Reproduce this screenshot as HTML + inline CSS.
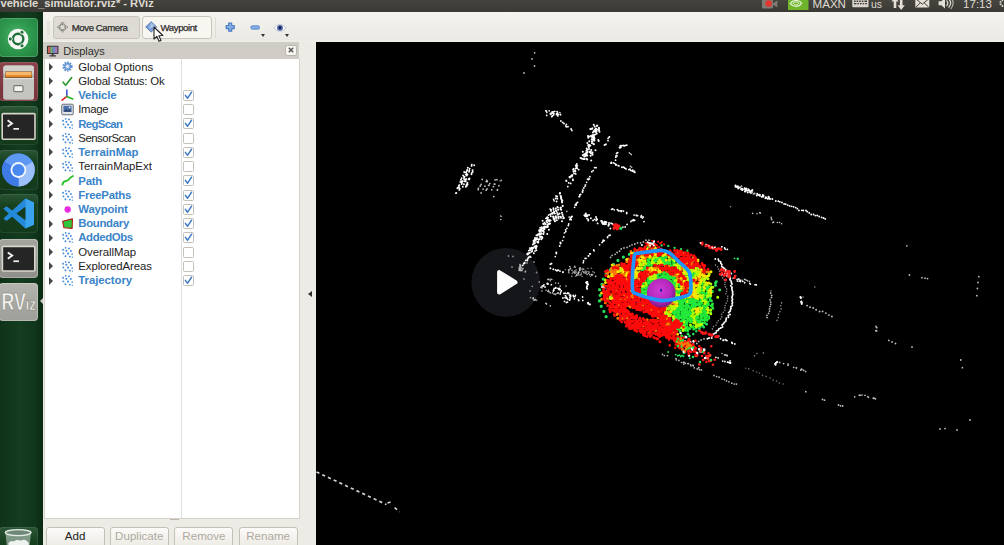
<!DOCTYPE html>
<html><head><meta charset="utf-8"><title>RViz</title>
<style>
*{box-sizing:border-box;margin:0;padding:0}
html,body{width:1004px;height:545px;overflow:hidden;background:#000;font-family:"Liberation Sans",sans-serif;}
#root{position:relative;width:1004px;height:545px;overflow:hidden;background:#edebe5}
.abs{position:absolute}
#topbar{left:0;top:0;width:1004px;height:12px;background:linear-gradient(#45443f,#3a3934);color:#dfdbd2;font-size:11.2px;font-weight:bold;overflow:hidden}
#topbar .title{position:absolute;left:0.5px;top:-2.6px;white-space:nowrap;letter-spacing:-0.04px}
#topbar .ind{position:absolute;top:-3.2px;font-weight:normal;white-space:nowrap;font-size:11.6px}
#launcher{left:0;top:12px;width:43px;height:533px;background:linear-gradient(90deg,#0e3318,#143c1f 45%,#10371b 80%,#0a2912);overflow:hidden}
.tile{position:absolute;left:-1px;width:39px;border-radius:4px;overflow:hidden}
#toolbar{left:43px;top:12px;width:961px;height:30px;background:linear-gradient(#f5f4ef,#ebe9e3 92%,#f0efea)}
.tbtn{position:absolute;top:4.3px;height:22.6px;border:1px solid #c9c5bc;border-radius:3px;font-size:9.6px;color:#2b2b2b;line-height:22.6px;white-space:nowrap;letter-spacing:-0.42px;-webkit-text-stroke:0.25px #2b2b2b}
#panel{left:43px;top:42px;width:273px;height:503px;background:#edebe5}
#phead{left:0;top:0;width:256px;height:17px;background:#cfccc5;font-size:11px;color:#2e2e2e;line-height:16px}
#tree{left:0.5px;top:16.5px;width:256.3px;height:460px;background:#fff;border:1px solid #d6d2ca;border-top:none}
#tree .divider{position:absolute;left:136px;top:0;width:1px;height:100%;background:#dedede}
.row{position:absolute;left:0;height:14px;width:255px;font-size:11.4px;line-height:14px;color:#222;white-space:nowrap}
.row .arr{position:absolute;left:4.9px;top:3px;width:0;height:0;border-left:4.5px solid #444;border-top:4px solid transparent;border-bottom:4px solid transparent}
.row .ic{position:absolute;left:16.6px;top:0.5px;width:13px;height:13px}
.row .lb{position:absolute;left:33.8px;top:-0.3px}
.row.b .lb{font-weight:bold;color:#3a84c8;letter-spacing:-0.15px}
.row .cb{position:absolute;left:138.6px;top:1.5px;width:11px;height:11px;border:1px solid #c4c0b8;background:#fff;border-radius:1.5px}
.row .cb svg{position:absolute;left:-1px;top:-1px;width:11px;height:11px}
.btn{position:absolute;top:485px;height:22px;border:1px solid #c4c0b7;border-radius:3px;background:linear-gradient(#fcfbf9,#ece9e2);font-size:11.6px;text-align:center;line-height:15.8px;color:#aeaaa1}
#view{left:316px;top:42px;width:688px;height:503px;background:#000;overflow:hidden}
#view svg{position:absolute;left:0;top:0;filter:blur(0.3px)}
</style></head><body>
<div id="root">
<div id="topbar" class="abs"><span class="title">vehicle_simulator.rviz* - RViz</span>
<span class="ind" style="left:812.5px">MAXN</span><span class="ind" style="left:871px;font-size:10.5px;top:-2.4px">us</span><span class="ind" style="left:963px">17:13</span>
<svg class="abs" style="left:761px;top:0" width="18" height="12" viewBox="0 0 18 12"><rect x="1" y="-2" width="11" height="10.5" rx="1.5" fill="#7f7a74"/><path d="M12 3.2 L16.4 0.4 V7.2 L12 5Z" fill="#7f7a74"/><circle cx="7.6" cy="3.6" r="3.3" fill="#e2362e"/></svg>
<svg class="abs" style="left:788px;top:0" width="21" height="11" viewBox="0 0 21 11"><rect x="0" y="-2" width="20.5" height="12" fill="#6fb52c"/><path d="M2.2 3.6 C5 -0.6 11 -0.4 13.6 3.2 C11.2 7.2 5.6 7.6 2.2 3.6Z" fill="none" stroke="#e6f2d6" stroke-width="1.2"/><path d="M5 3.4 C6.4 1.4 9.6 1.4 11 3.3 C9.6 5.2 6.6 5.4 5 3.4Z" fill="none" stroke="#e6f2d6" stroke-width="1"/></svg>
<svg class="abs" style="left:852px;top:0" width="17" height="8" viewBox="0 0 17 8"><rect x="0.3" y="-2" width="16.2" height="9.3" rx="0.8" fill="#d9d5cc"/><g fill="#3c3b37"><rect x="2" y="0.5" width="1.6" height="1.5"/><rect x="4.6" y="0.5" width="1.6" height="1.5"/><rect x="7.2" y="0.5" width="1.6" height="1.5"/><rect x="9.8" y="0.5" width="1.6" height="1.5"/><rect x="12.4" y="0.5" width="2.6" height="1.5"/><rect x="2" y="3" width="2.4" height="1.3"/><rect x="5.4" y="3" width="1.6" height="1.3"/><rect x="8" y="3" width="1.6" height="1.3"/><rect x="10.6" y="3" width="1.6" height="1.3"/><rect x="13.2" y="3" width="1.8" height="1.3"/></g></svg>
<svg class="abs" style="left:891px;top:0" width="15" height="11" viewBox="0 0 15 11"><g fill="#e4e0d7"><path d="M4 -3 L7.6 1.6 H5.3 V8 H2.7 V1.6 H0.4Z"/><path d="M10.2 10 L13.8 5.2 H11.5 V-1 H8.9 V5.2 H6.6Z"/></g></svg>
<svg class="abs" style="left:915px;top:0" width="15" height="9" viewBox="0 0 15 9"><rect x="0.3" y="-2" width="14" height="9.6" rx="0.8" fill="#e4e0d7"/><path d="M1 -1 L7.3 4.2 L13.6 -1 M1 7 L5.4 2.8 M13.6 7 L9.2 2.8" fill="none" stroke="#3c3b37" stroke-width="1"/></svg>
<svg class="abs" style="left:938px;top:0" width="17" height="11" viewBox="0 0 17 11"><path d="M0.6 1.2 H3.4 L7 -2.2 V8.6 L3.4 5.2 H0.6Z" fill="#e4e0d7"/><g fill="none" stroke="#e4e0d7" stroke-width="1.2" stroke-linecap="round"><path d="M8.8 0.8 C10 2.2 10 4.2 8.8 5.6"/><path d="M10.9 -0.8 C13 1.6 13 4.8 10.9 7.2"/><path d="M13 -2.2 C15.8 0.8 15.8 5.6 13 8.6" opacity="0.7"/></g></svg>
<svg class="abs" style="left:998px;top:0" width="8" height="10" viewBox="0 0 8 10"><circle cx="5.4" cy="3" r="3" fill="none" stroke="#e4e0d7" stroke-width="2" stroke-dasharray="1.4 1"/></svg>

</div>
<div id="launcher" class="abs">
<!-- coordinates relative to launcher (top = 12) -->
<div class="tile" style="top:5.5px;height:39px;background:radial-gradient(circle at 45% 45%,#4fb56c 0%,#2f9a4f 45%,#1f7f3c 100%);box-shadow:inset 0 0 0 1px rgba(255,255,255,0.18)">
<svg style="position:absolute;left:0;top:0" width="39" height="39" viewBox="0 0 39 39"><circle cx="19.1" cy="21" r="10.3" fill="#f4f7f4"/><circle cx="19.1" cy="21" r="5.2" fill="none" stroke="#1f6d38" stroke-width="2.4"/><g fill="#1f6d38" stroke="#f4f7f4" stroke-width="0.9"><circle cx="11.3" cy="21" r="2"/><circle cx="23" cy="14.2" r="2"/><circle cx="23" cy="27.8" r="2"/></g></svg></div>
<div class="tile" style="top:49.5px;height:39.5px;background:linear-gradient(#8a444b,#78333a);box-shadow:inset 0 0 0 1px rgba(255,255,255,0.12)">
<svg style="position:absolute;left:0;top:0" width="39" height="40" viewBox="0 0 39 40"><rect x="4.3" y="3.6" width="30.7" height="34" rx="2.6" fill="#b4b4b0"/><rect x="4.3" y="3.6" width="30.7" height="9" rx="2.6" fill="#d2d1cc"/><rect x="6.2" y="9.4" width="26.8" height="7.4" fill="#6b4a2a"/><rect x="6.6" y="9.8" width="26" height="3.6" fill="#f7b86b"/><rect x="6.6" y="13" width="26" height="2.2" fill="#e58a2c"/><rect x="4.3" y="16" width="30.7" height="21.6" rx="2" fill="#c4c4c0"/><rect x="4.3" y="16" width="30.7" height="1.2" fill="#e2e2de"/><rect x="14.8" y="23.6" width="9.2" height="6" rx="1.2" fill="#f4f4f2" stroke="#77776f" stroke-width="1.2"/></svg></div>
<div class="tile" style="top:93.5px;height:39.5px;background:linear-gradient(#2f5a3a,#17401f 30%,#123a1b);box-shadow:inset 0 0 0 1px rgba(255,255,255,0.08)">
<svg style="position:absolute;left:0;top:0" width="39" height="40" viewBox="0 0 39 40"><rect x="3.2" y="7.6" width="32.8" height="25.6" rx="1" fill="#252525" stroke="#d8d5cb" stroke-width="1.6"/><path d="M8.6 14.2 L13 17.4 L8.6 20.6" fill="none" stroke="#f1f1f1" stroke-width="1.9"/><rect x="14.4" y="22" width="5.6" height="1.7" fill="#f1f1f1"/></svg></div>
<div class="tile" style="top:138px;height:39.5px;background:linear-gradient(#2a5535,#17401f 30%,#123a1b);box-shadow:inset 0 0 0 1px rgba(255,255,255,0.08)">
<svg style="position:absolute;left:0;top:0" width="40" height="40" viewBox="0 0 40 40"><circle cx="19.4" cy="20" r="16.4" fill="#4a8af0"/><path d="M19.4 20 L5.3 11.6 A16.4 16.4 0 0 1 33.6 11.8Z" fill="#5d98f3"/><path d="M19.4 20 L33.6 11.8 A16.4 16.4 0 0 1 19.6 36.4Z" fill="#9cc0fa"/><path d="M19.4 20 L19.6 36.4 A16.4 16.4 0 0 1 5.3 11.6Z" fill="#3f7be6"/><circle cx="19.4" cy="20" r="7.9" fill="#f3f7ff"/><circle cx="19.4" cy="20" r="6.1" fill="#4a8af0"/></svg></div>
<div class="tile" style="top:182px;height:38.5px;background:linear-gradient(#2a5535,#17401f 30%,#123a1b);box-shadow:inset 0 0 0 1px rgba(255,255,255,0.08)">
<svg style="position:absolute;left:0;top:0" width="39" height="39" viewBox="0 0 39 39"><path d="M26.4 4.6 L35 8.6 V30.8 L26.4 34.6 L4.4 14.8 L7.4 12.2 L26.4 26 V13 L7.4 27 L4.4 24.6Z" fill="#2489d6"/><path d="M26.4 4.6 L35 8.6 V30.8 L26.4 34.6Z" fill="#3aa3ee"/><path d="M26.4 13 V26 L17.6 19.6Z" fill="#123a1b"/></svg></div>
<div class="tile" style="top:226.5px;height:39px;background:linear-gradient(#a5a5a0,#8f8f8a);box-shadow:inset 0 0 0 1px rgba(255,255,255,0.25)">
<svg style="position:absolute;left:0;top:0" width="39" height="39" viewBox="0 0 39 39"><rect x="3.4" y="7.4" width="32.4" height="24.6" rx="1" fill="#252525" stroke="#d8d5cb" stroke-width="1.6"/><path d="M8.8 13.4 L13.2 16.6 L8.8 19.8" fill="none" stroke="#f1f1f1" stroke-width="1.9"/><rect x="14.4" y="21.4" width="5.6" height="1.7" fill="#f1f1f1"/></svg></div>
<div class="tile" style="top:270.5px;height:38px;background:linear-gradient(#b4b4ae,#9f9f99);box-shadow:inset 0 0 0 1px rgba(255,255,255,0.25)">
<svg style="position:absolute;left:0;top:0" width="39" height="38" viewBox="0 0 39 38"><text x="2.4" y="27.4" font-family="Liberation Sans, sans-serif" font-size="23" font-weight="bold" fill="#f4f4f0" stroke="#77776f" stroke-width="0.5"><tspan textLength="24.5" lengthAdjust="spacingAndGlyphs">RV</tspan><tspan x="26.4" font-size="16" textLength="10.6" lengthAdjust="spacingAndGlyphs">iz</tspan></text></svg></div>
<i class="abs" style="left:39.6px;top:286.4px;border-right:3.4px solid #c9c9c3;border-top:3.4px solid transparent;border-bottom:3.4px solid transparent"></i>
<div class="tile" style="top:514.5px;height:40px;background:linear-gradient(#2a5535,#17401f 40%,#123a1b);box-shadow:inset 0 0 0 1px rgba(255,255,255,0.08)">
<svg style="position:absolute;left:0;top:0" width="39" height="40" viewBox="0 0 39 40"><path d="M6.4 5.6 L9 30 H29.4 L32 5.6Z" fill="#9fb3a6" opacity="0.75"/><ellipse cx="19.2" cy="5.6" rx="12.9" ry="3" fill="#6f8878" stroke="#e3ebe5" stroke-width="1.4"/><path d="M9.4 16 C12 12.8 14 15 16.4 13.4 C18.6 11.8 21 14.6 23.4 13 C25.6 11.8 28.6 14 29.8 16 L29 30 H10Z" fill="#eef2ee"/></svg></div>

</div>
<div id="toolbar" class="abs">
<div class="tbtn" style="left:10.4px;width:87px;background:#dedbd4;padding-left:17.4px">Move Camera</div>
<div class="tbtn" style="left:99.2px;width:69.4px;background:#f8f6f1;padding-left:17.4px">Waypoint</div>
<i class="abs" style="left:4.3px;top:8.5px;width:3px;height:14px;background-image:radial-gradient(circle,#dcd9d1 0.5px,transparent 0.75px);background-size:1.5px 2px"></i>
<svg class="abs" style="left:13.3px;top:9.2px" width="13" height="12.4" viewBox="0 0 18 18"><g fill="none" stroke="#4a4a4a" stroke-width="1.1" stroke-dasharray="1.6 1.0"><rect x="5.5" y="5.5" width="7" height="7"/><path d="M9 1.5 L6.6 4.4 H11.4Z M9 16.5 L6.6 13.6 H11.4Z M1.5 9 L4.4 6.6 V11.4Z M16.5 9 L13.6 6.6 V11.4Z"/></g></svg>
<svg class="abs" style="left:101.8px;top:8.8px" width="12.4" height="11.8" viewBox="0 0 12.4 11.8"><path d="M0.7 5.9 L6.2 0.7 L11.7 5.9 L6.2 11.1Z" fill="#7a9fd8" stroke="#4a6aa6" stroke-width="0.8"/><path d="M6.2 1.4 L10.8 5.7 L4 7.5Z" fill="#b4cbee" opacity="0.8"/></svg>
<svg class="abs" style="left:110px;top:13.6px" width="12" height="18" viewBox="0 0 12 18"><path d="M1 1 L1 13 L3.9 10.4 L6 15.3 L8 14.4 L5.9 9.7 L9.8 9.5Z" fill="#fff" stroke="#222" stroke-width="1.1" stroke-linejoin="round"/></svg>
<i class="abs" style="left:172.2px;top:5px;width:1px;height:21px;background:#e0ddd5"></i>
<svg class="abs" style="left:181.9px;top:10.2px" width="10.4" height="10.2" viewBox="0 0 12 12"><path d="M4.2 1.2 H7.8 V4.2 H10.8 V7.8 H7.8 V10.8 H4.2 V7.8 H1.2 V4.2 H4.2Z" fill="#86aee3" stroke="#4b7cc2" stroke-width="1.3" stroke-linejoin="round"/></svg>
<svg class="abs" style="left:206.6px;top:12.6px" width="10.4" height="5.2" viewBox="0 0 12 6"><rect x="1" y="1" width="10" height="3.8" rx="1.6" fill="#86aee3" stroke="#5b8bd0" stroke-width="1.1"/></svg>
<i class="abs" style="left:217.8px;top:21.8px;border-top:3px solid #333;border-left:2.6px solid transparent;border-right:2.6px solid transparent"></i>
<svg class="abs" style="left:229.5px;top:10.5px" width="14" height="10" viewBox="0 0 14 10"><path d="M0.8 5 C3.5 0.5 10.5 0.5 13.2 5 C10.5 9.3 3.5 9.3 0.8 5Z" fill="#f4f6fb" stroke="#b7bfd2" stroke-width="0.8"/><circle cx="7" cy="4.8" r="2.9" fill="#4a62a8"/><circle cx="7" cy="4.8" r="1.3" fill="#141a3a"/></svg>
<i class="abs" style="left:242.3px;top:21.8px;border-top:3px solid #333;border-left:2.6px solid transparent;border-right:2.6px solid transparent"></i>

</div>
<div id="panel" class="abs">
<div id="phead" class="abs"><span style="position:absolute;left:20.3px;top:0.5px">Displays</span></div>
<svg class="abs" style="left:2.9px;top:3.2px" width="13.4" height="12" viewBox="0 0 15 14"><rect x="0.8" y="0.8" width="13.4" height="9.8" rx="1" fill="#333"/><rect x="2" y="2" width="2.8" height="7.4" fill="#c9605a"/><rect x="4.8" y="2" width="2.7" height="7.4" fill="#7ab776"/><rect x="7.5" y="2" width="2.7" height="7.4" fill="#6f86c8"/><rect x="10.2" y="2" width="2.8" height="7.4" fill="#a877b8"/><rect x="6.3" y="10.6" width="2.4" height="1.6" fill="#333"/><rect x="3.6" y="12" width="7.8" height="1.4" rx="0.6" fill="#333"/></svg>
<div class="abs" style="left:242px;top:2.6px;width:12px;height:11.6px;border:1px solid #b9b5ac;border-radius:2.5px;background:#f8f7f3"><svg style="position:absolute;left:2px;top:1.8px" width="6" height="6" viewBox="0 0 6 6"><path d="M0.8 0.8 L5.2 5.2 M5.2 0.8 L0.8 5.2" stroke="#555" stroke-width="1.5"/></svg></div>
<i class="abs" style="left:264.6px;top:248.8px;border-right:4.2px solid #2e2e2e;border-top:3.9px solid transparent;border-bottom:3.9px solid transparent"></i>
<i class="abs" style="left:127px;top:477.2px;width:9px;height:1.2px;background-image:radial-gradient(circle,#bdb9b0 0.5px,transparent 0.7px);background-size:1.8px 1.2px"></i>

<div id="tree" class="abs"><div class="divider"></div>
<div class="row" style="top:1.40px"><i class="arr"></i><svg class="ic" viewBox="0 0 14 14"><circle cx="7" cy="7" r="4.2" fill="none" stroke="#5b8fd0" stroke-width="2.6" stroke-dasharray="1.6 1.1"/><circle cx="7" cy="7" r="3.4" fill="#8fb4e3" stroke="#4a7fc4" stroke-width="0.8"/><circle cx="7" cy="7" r="1.5" fill="#e9f0fa"/></svg><span class="lb" style="letter-spacing:-0.04px">Global Options</span></div>
<div class="row" style="top:15.64px"><i class="arr"></i><svg class="ic" viewBox="0 0 14 14"><path d="M2.2 7.8 L5 11 L11.5 2.8" fill="none" stroke="#2f9a2f" stroke-width="1.8" stroke-linecap="round" stroke-linejoin="round"/></svg><span class="lb" style="letter-spacing:-0.18px">Global Status: Ok</span></div>
<div class="row b" style="top:29.88px"><i class="arr"></i><svg class="ic" viewBox="0 0 14 14"><path d="M6.3 8 L6.3 1.2" stroke="#2b4fd6" stroke-width="1.6" stroke-linecap="round"/><path d="M6.3 8 L1.2 12" stroke="#e02020" stroke-width="1.7" stroke-linecap="round"/><path d="M6.3 8 L12.6 10.8" stroke="#27b327" stroke-width="1.7" stroke-linecap="round"/></svg><span class="lb" style="letter-spacing:-0.15px">Vehicle</span><span class="cb"><svg viewBox="0 0 11 11"><path d="M2.4 5.4 L4.6 8.2 L8.6 2.2" fill="none" stroke="#3a78c2" stroke-width="1.5" stroke-linecap="round" stroke-linejoin="round"/></svg></span></div>
<div class="row" style="top:44.12px"><i class="arr"></i><svg class="ic" viewBox="0 0 14 14"><rect x="0.8" y="1.3" width="12.4" height="11.4" rx="1.2" fill="#dfe3ea" stroke="#5b5f66" stroke-width="1"/><rect x="2.6" y="3" width="8.8" height="6.4" fill="#4a6ea8"/><path d="M2.6 9.4 L5.5 6.5 L7.5 8.3 L9.3 7 L11.4 9.4Z" fill="#2a3f66"/><circle cx="9.3" cy="4.7" r="1" fill="#e8eefc"/></svg><span class="lb" style="letter-spacing:-0.35px">Image</span><span class="cb"></span></div>
<div class="row b" style="top:58.36px"><i class="arr"></i><svg class="ic" viewBox="0 0 14 14" fill="#3f86d6"><circle cx="2.2" cy="4" r="1"/><circle cx="5" cy="2" r="0.9"/><circle cx="8.6" cy="2.6" r="1"/><circle cx="5.8" cy="5.2" r="1.1"/><circle cx="10.6" cy="5.4" r="1"/><circle cx="2.6" cy="8" r="1"/><circle cx="7.6" cy="8.2" r="1.1"/><circle cx="12" cy="8.6" r="0.9"/><circle cx="4.8" cy="11" r="1"/><circle cx="9.6" cy="11.4" r="1"/><circle cx="12.2" cy="12" r="0.7"/></svg><span class="lb" style="letter-spacing:-0.69px">RegScan</span><span class="cb"><svg viewBox="0 0 11 11"><path d="M2.4 5.4 L4.6 8.2 L8.6 2.2" fill="none" stroke="#3a78c2" stroke-width="1.5" stroke-linecap="round" stroke-linejoin="round"/></svg></span></div>
<div class="row" style="top:72.60px"><i class="arr"></i><svg class="ic" viewBox="0 0 14 14" fill="#3f86d6"><circle cx="2.2" cy="4" r="1"/><circle cx="5" cy="2" r="0.9"/><circle cx="8.6" cy="2.6" r="1"/><circle cx="5.8" cy="5.2" r="1.1"/><circle cx="10.6" cy="5.4" r="1"/><circle cx="2.6" cy="8" r="1"/><circle cx="7.6" cy="8.2" r="1.1"/><circle cx="12" cy="8.6" r="0.9"/><circle cx="4.8" cy="11" r="1"/><circle cx="9.6" cy="11.4" r="1"/><circle cx="12.2" cy="12" r="0.7"/></svg><span class="lb" style="letter-spacing:-0.49px">SensorScan</span><span class="cb"></span></div>
<div class="row b" style="top:86.84px"><i class="arr"></i><svg class="ic" viewBox="0 0 14 14" fill="#3f86d6"><circle cx="2.2" cy="4" r="1"/><circle cx="5" cy="2" r="0.9"/><circle cx="8.6" cy="2.6" r="1"/><circle cx="5.8" cy="5.2" r="1.1"/><circle cx="10.6" cy="5.4" r="1"/><circle cx="2.6" cy="8" r="1"/><circle cx="7.6" cy="8.2" r="1.1"/><circle cx="12" cy="8.6" r="0.9"/><circle cx="4.8" cy="11" r="1"/><circle cx="9.6" cy="11.4" r="1"/><circle cx="12.2" cy="12" r="0.7"/></svg><span class="lb" style="letter-spacing:-0.04px">TerrainMap</span><span class="cb"><svg viewBox="0 0 11 11"><path d="M2.4 5.4 L4.6 8.2 L8.6 2.2" fill="none" stroke="#3a78c2" stroke-width="1.5" stroke-linecap="round" stroke-linejoin="round"/></svg></span></div>
<div class="row" style="top:101.08px"><i class="arr"></i><svg class="ic" viewBox="0 0 14 14" fill="#3f86d6"><circle cx="2.2" cy="4" r="1"/><circle cx="5" cy="2" r="0.9"/><circle cx="8.6" cy="2.6" r="1"/><circle cx="5.8" cy="5.2" r="1.1"/><circle cx="10.6" cy="5.4" r="1"/><circle cx="2.6" cy="8" r="1"/><circle cx="7.6" cy="8.2" r="1.1"/><circle cx="12" cy="8.6" r="0.9"/><circle cx="4.8" cy="11" r="1"/><circle cx="9.6" cy="11.4" r="1"/><circle cx="12.2" cy="12" r="0.7"/></svg><span class="lb" style="letter-spacing:0.01px">TerrainMapExt</span><span class="cb"></span></div>
<div class="row b" style="top:115.32px"><i class="arr"></i><svg class="ic" viewBox="0 0 14 14"><path d="M1.5 11.5 C3 5.5 6 9 8 6.2 C9.6 4 10.5 3 12.8 2.2" fill="none" stroke="#2fc12f" stroke-width="2" stroke-linecap="round"/></svg><span class="lb" style="letter-spacing:-0.22px">Path</span><span class="cb"><svg viewBox="0 0 11 11"><path d="M2.4 5.4 L4.6 8.2 L8.6 2.2" fill="none" stroke="#3a78c2" stroke-width="1.5" stroke-linecap="round" stroke-linejoin="round"/></svg></span></div>
<div class="row b" style="top:129.56px"><i class="arr"></i><svg class="ic" viewBox="0 0 14 14" fill="#3f86d6"><circle cx="2.2" cy="4" r="1"/><circle cx="5" cy="2" r="0.9"/><circle cx="8.6" cy="2.6" r="1"/><circle cx="5.8" cy="5.2" r="1.1"/><circle cx="10.6" cy="5.4" r="1"/><circle cx="2.6" cy="8" r="1"/><circle cx="7.6" cy="8.2" r="1.1"/><circle cx="12" cy="8.6" r="0.9"/><circle cx="4.8" cy="11" r="1"/><circle cx="9.6" cy="11.4" r="1"/><circle cx="12.2" cy="12" r="0.7"/></svg><span class="lb" style="letter-spacing:-0.25px">FreePaths</span><span class="cb"><svg viewBox="0 0 11 11"><path d="M2.4 5.4 L4.6 8.2 L8.6 2.2" fill="none" stroke="#3a78c2" stroke-width="1.5" stroke-linecap="round" stroke-linejoin="round"/></svg></span></div>
<div class="row b" style="top:143.80px"><i class="arr"></i><svg class="ic" viewBox="0 0 14 14"><circle cx="7.2" cy="7" r="3.4" fill="#e82be0"/></svg><span class="lb" style="letter-spacing:-0.20px">Waypoint</span><span class="cb"><svg viewBox="0 0 11 11"><path d="M2.4 5.4 L4.6 8.2 L8.6 2.2" fill="none" stroke="#3a78c2" stroke-width="1.5" stroke-linecap="round" stroke-linejoin="round"/></svg></span></div>
<div class="row b" style="top:158.04px"><i class="arr"></i><svg class="ic" viewBox="0 0 14 14"><path d="M1.8 4.6 L12.3 2 L12 12.2 L3.2 11.6Z" fill="#2fc83a" stroke="#b01818" stroke-width="1.2" stroke-linejoin="round"/></svg><span class="lb" style="letter-spacing:-0.32px">Boundary</span><span class="cb"><svg viewBox="0 0 11 11"><path d="M2.4 5.4 L4.6 8.2 L8.6 2.2" fill="none" stroke="#3a78c2" stroke-width="1.5" stroke-linecap="round" stroke-linejoin="round"/></svg></span></div>
<div class="row b" style="top:172.28px"><i class="arr"></i><svg class="ic" viewBox="0 0 14 14" fill="#3f86d6"><circle cx="2.2" cy="4" r="1"/><circle cx="5" cy="2" r="0.9"/><circle cx="8.6" cy="2.6" r="1"/><circle cx="5.8" cy="5.2" r="1.1"/><circle cx="10.6" cy="5.4" r="1"/><circle cx="2.6" cy="8" r="1"/><circle cx="7.6" cy="8.2" r="1.1"/><circle cx="12" cy="8.6" r="0.9"/><circle cx="4.8" cy="11" r="1"/><circle cx="9.6" cy="11.4" r="1"/><circle cx="12.2" cy="12" r="0.7"/></svg><span class="lb" style="letter-spacing:-0.40px">AddedObs</span><span class="cb"><svg viewBox="0 0 11 11"><path d="M2.4 5.4 L4.6 8.2 L8.6 2.2" fill="none" stroke="#3a78c2" stroke-width="1.5" stroke-linecap="round" stroke-linejoin="round"/></svg></span></div>
<div class="row" style="top:186.52px"><i class="arr"></i><svg class="ic" viewBox="0 0 14 14" fill="#3f86d6"><circle cx="2.2" cy="4" r="1"/><circle cx="5" cy="2" r="0.9"/><circle cx="8.6" cy="2.6" r="1"/><circle cx="5.8" cy="5.2" r="1.1"/><circle cx="10.6" cy="5.4" r="1"/><circle cx="2.6" cy="8" r="1"/><circle cx="7.6" cy="8.2" r="1.1"/><circle cx="12" cy="8.6" r="0.9"/><circle cx="4.8" cy="11" r="1"/><circle cx="9.6" cy="11.4" r="1"/><circle cx="12.2" cy="12" r="0.7"/></svg><span class="lb" style="letter-spacing:-0.06px">OverallMap</span><span class="cb"></span></div>
<div class="row" style="top:200.76px"><i class="arr"></i><svg class="ic" viewBox="0 0 14 14" fill="#3f86d6"><circle cx="2.2" cy="4" r="1"/><circle cx="5" cy="2" r="0.9"/><circle cx="8.6" cy="2.6" r="1"/><circle cx="5.8" cy="5.2" r="1.1"/><circle cx="10.6" cy="5.4" r="1"/><circle cx="2.6" cy="8" r="1"/><circle cx="7.6" cy="8.2" r="1.1"/><circle cx="12" cy="8.6" r="0.9"/><circle cx="4.8" cy="11" r="1"/><circle cx="9.6" cy="11.4" r="1"/><circle cx="12.2" cy="12" r="0.7"/></svg><span class="lb" style="letter-spacing:-0.09px">ExploredAreas</span><span class="cb"></span></div>
<div class="row b" style="top:215.00px"><i class="arr"></i><svg class="ic" viewBox="0 0 14 14" fill="#3f86d6"><circle cx="2.2" cy="4" r="1"/><circle cx="5" cy="2" r="0.9"/><circle cx="8.6" cy="2.6" r="1"/><circle cx="5.8" cy="5.2" r="1.1"/><circle cx="10.6" cy="5.4" r="1"/><circle cx="2.6" cy="8" r="1"/><circle cx="7.6" cy="8.2" r="1.1"/><circle cx="12" cy="8.6" r="0.9"/><circle cx="4.8" cy="11" r="1"/><circle cx="9.6" cy="11.4" r="1"/><circle cx="12.2" cy="12" r="0.7"/></svg><span class="lb" style="letter-spacing:-0.07px">Trajectory</span><span class="cb"><svg viewBox="0 0 11 11"><path d="M2.4 5.4 L4.6 8.2 L8.6 2.2" fill="none" stroke="#3a78c2" stroke-width="1.5" stroke-linecap="round" stroke-linejoin="round"/></svg></span></div>
</div>
<div class="btn" style="left:2.6px;width:59.1px;color:#222">Add</div>
<div class="btn" style="left:66.7px;width:59.1px">Duplicate</div>
<div class="btn" style="left:131.4px;width:59.1px">Remove</div>
<div class="btn" style="left:195.5px;width:59.2px">Rename</div>
</div>
<div id="view" class="abs">
<svg width="688" height="503" viewBox="316 42 688 503">
<circle cx="505.8" cy="282.4" r="34.4" fill="#15161a"/>
<g fill="none" stroke-linecap="round">
<path stroke="#bdbdbd" stroke-width="1.77" d="M534.6 52.8h0M532.0 59.0h0M534.5 66.0h0M524.0 73.0h0M519.9 269.6h0M521.0 267.7h0M519.1 268.1h0M521.7 270.3h0M520.1 266.6h0M520.0 264.7h0M521.9 270.6h0M520.5 269.7h0M522.6 268.6h0M520.6 270.4h0M519.6 269.5h0M519.2 270.3h0M519.5 268.7h0M520.7 265.5h0M478.4 188.3h0M481.1 184.5h0M482.2 179.4h0M480.2 186.2h0M478.2 189.7h0M481.1 193.0h0M486.7 180.4h0M487.2 181.5h0M483.1 189.1h0M487.0 180.7h0M486.2 181.6h0M484.9 186.2h0M487.1 188.8h0M489.0 185.3h0M486.2 190.2h0M489.8 183.6h0M488.6 185.3h0M491.8 189.8h0M494.9 184.1h0M493.5 186.7h0M495.1 179.9h0M494.2 184.1h0M496.9 179.7h0M497.4 190.2h0M498.9 185.7h0M501.2 180.4h0M493.8 196.6h0M497.5 189.6h0M619.7 277.2h0M620.1 274.3h0M622.6 272.5h0M624.1 270.1h0M625.4 267.6h0M628.4 266.3h0M630.6 264.5h0M610.6 257.4h0M612.1 255.3h0M615.1 254.3h0M617.1 252.5h0M619.6 251.2h0M621.2 248.9h0M624.0 247.9h0M627.1 247.4h0M629.6 246.1h0M632.0 244.8h0M634.8 244.0h0M637.5 242.8h0M640.6 242.9h0M643.4 242.0h0M645.9 240.2h0M649.0 240.2h0M770.6 293.1h0M771.7 295.4h0M771.5 297.6h0M770.0 299.8h0M770.7 302.1h0M770.7 304.4h0M770.0 306.6h0M769.5 308.8h0M769.5 311.1h0M768.6 313.3h0M766.9 315.3h0M767.1 317.6h0M704.0 338.9h0M701.1 339.9h0M698.7 341.4h0M696.8 343.5h0M693.5 343.9h0M690.8 345.0h0M688.2 346.2h0M685.2 346.9h0M682.6 348.4h0M679.4 348.2h0M753.4 193.9h0M754.8 193.5h0M741.5 186.2h0M750.8 191.1h0M748.1 190.8h0M743.2 189.3h0M744.6 189.7h0M737.3 187.6h0M752.5 192.0h0M740.5 187.5h0M748.0 188.8h0M742.9 189.6h0M741.7 188.8h0M748.7 190.7h0M876.8 327.7h0M875.8 330.7h0M876.7 330.9h0M876.7 330.8h0M788.1 364.1h0M779.7 362.4h0M796.4 367.7h0M800.8 370.0h0M796.4 368.1h0M803.7 370.3h0M801.5 369.2h0M801.9 369.4h0M793.7 367.3h0M805.6 371.6h0M788.0 365.2h0M783.6 363.6h0M822.5 399.4h0M824.5 400.2h0M840.5 405.8h0M838.5 405.0h0M805.8 391.7h0M859.3 395.3h0M860.1 395.2h0M854.7 396.8h0M906.8 245.8h0M909.4 275.0h0M922.0 277.7h0M925.0 278.2h0M927.5 278.6h0M978.8 276.7h0M978.0 282.5h0M977.4 288.5h0M976.8 295.7h0M876.0 326.5h0M888.8 340.4h0M892.0 342.0h0M895.5 343.5h0M912.0 347.0h0M960.8 360.0h0M962.4 367.7h0M842.6 406.0h0M940.0 429.0h0M957.0 430.0h0M945.0 428.6h0M970.0 420.0h0"/>
<path stroke="#ffffff" stroke-width="1.77" d="M553.7 114.8h0M553.9 113.5h0M550.3 113.7h0M560.6 114.7h0M560.2 114.4h0M557.0 114.3h0M546.7 115.4h0M557.5 114.8h0M546.5 111.2h0M550.6 113.3h0M556.5 113.9h0M557.6 113.0h0M556.5 114.6h0M551.7 116.7h0M557.8 115.9h0M551.9 112.8h0M553.3 113.8h0M558.2 114.4h0M552.8 112.5h0M552.4 116.0h0M551.0 114.4h0M557.1 111.6h0M571.1 129.0h0M565.7 125.9h0M566.4 124.4h0M571.9 130.4h0M564.1 123.6h0M568.0 126.7h0M566.4 126.8h0M560.9 121.0h0M562.6 122.4h0M563.9 123.4h0M606.0 144.2h0M609.4 136.8h0M605.6 144.7h0M608.0 140.7h0M604.5 145.0h0M608.1 138.4h0M608.3 138.1h0M609.3 137.0h0M553.6 199.3h0M556.6 196.7h0M557.2 196.5h0M554.1 200.8h0M555.7 198.5h0M550.1 209.1h0M556.0 196.0h0M557.4 198.7h0M551.0 211.0h0M556.6 201.5h0M525.7 260.4h0M528.1 258.2h0M530.8 257.1h0M524.9 262.9h0M527.3 259.9h0M529.4 256.8h0M524.4 262.6h0M524.1 263.5h0M527.5 259.2h0M523.7 263.7h0M528.6 257.4h0M522.8 265.4h0M530.0 256.4h0M527.4 260.6h0M588.3 179.5h0M594.6 167.6h0M587.6 179.2h0M591.8 171.7h0M593.2 170.6h0M589.4 178.9h0M596.1 167.7h0M589.9 176.7h0M579.1 196.7h0M579.6 196.5h0M583.7 187.9h0M583.0 190.4h0M585.4 184.9h0M580.7 194.5h0M582.4 191.3h0M579.7 194.8h0M586.6 182.3h0M582.5 192.3h0M585.1 186.2h0M572.1 216.4h0M568.3 225.5h0M571.4 217.3h0M568.7 223.9h0M570.6 218.9h0M565.6 229.8h0M570.9 217.6h0M576.0 204.0h0M576.2 205.0h0M571.3 217.0h0M569.8 219.5h0M576.6 203.1h0M566.9 228.3h0M577.7 202.3h0M571.2 219.7h0M575.2 205.0h0M564.5 232.8h0M565.8 231.5h0M574.6 207.3h0M563.7 236.9h0M550.7 264.0h0M550.3 264.3h0M562.6 240.6h0M560.4 242.8h0M551.5 263.7h0M560.4 242.3h0M556.2 252.5h0M559.7 246.0h0M556.5 252.7h0M560.5 243.6h0M560.3 242.8h0M551.6 263.7h0M560.8 243.3h0M556.3 253.5h0M555.3 256.6h0M624.2 145.9h0M625.2 145.5h0M621.7 145.6h0M626.8 145.2h0M623.3 145.5h0M620.3 145.7h0M616.0 156.0h0M616.1 156.1h0M616.5 153.7h0M619.5 147.4h0M620.0 147.9h0M621.0 147.1h0M615.6 160.2h0M617.8 152.6h0M615.8 157.2h0M617.0 155.9h0M616.8 153.2h0M613.5 162.8h0M588.3 219.4h0M586.9 218.4h0M584.3 215.2h0M588.3 220.6h0M585.8 215.6h0M588.0 220.1h0M626.6 212.8h0M626.6 212.9h0M626.8 212.6h0M621.3 211.5h0M643.3 217.1h0M619.0 210.9h0M626.7 213.6h0M612.7 208.8h0M637.6 215.7h0M634.1 215.1h0M621.8 210.8h0M623.5 211.1h0M611.6 209.3h0M641.1 217.2h0M618.2 210.5h0M641.8 216.5h0M641.0 216.8h0M617.3 209.6h0M636.2 215.6h0M636.3 215.2h0M620.7 210.8h0M614.2 209.8h0M625.2 227.0h0M633.9 220.6h0M627.1 224.4h0M634.7 220.3h0M632.3 220.5h0M633.3 220.4h0M622.9 227.1h0M633.6 219.6h0M630.9 221.5h0M603.2 240.1h0M604.3 240.6h0M602.1 242.4h0M607.5 237.6h0M609.0 235.5h0M607.6 236.9h0M602.9 241.4h0M610.2 235.1h0M594.1 250.8h0M593.7 250.0h0M589.7 253.9h0M590.3 253.9h0M588.6 256.0h0M585.1 258.4h0M599.6 244.8h0M588.3 255.8h0M586.0 258.3h0M580.0 268.8h0M580.4 268.2h0M579.9 270.1h0M578.2 273.3h0M576.8 275.1h0M583.3 262.7h0M578.7 272.2h0M583.6 260.9h0M553.9 290.2h0M588.2 302.7h0M578.8 300.6h0M554.2 288.4h0M542.8 285.9h0M545.0 287.0h0M544.0 284.8h0M563.9 293.4h0M587.9 303.6h0M570.7 296.5h0M560.2 293.9h0M553.3 291.1h0M569.4 294.9h0M574.7 296.7h0M560.6 292.3h0M588.9 303.9h0M590.2 304.3h0M553.6 290.1h0M558.0 293.0h0M582.8 300.4h0M543.2 286.1h0M573.5 296.5h0M589.7 304.5h0M578.4 299.8h0M587.7 303.0h0M570.5 296.0h0M566.8 297.9h0M575.4 295.5h0M565.5 295.6h0M564.5 301.3h0M562.9 298.0h0M570.3 298.8h0M574.4 298.8h0M566.4 297.1h0M570.7 296.1h0M566.5 298.2h0M567.5 302.1h0M567.3 298.8h0M565.0 297.6h0M570.1 296.8h0M569.9 297.4h0M573.2 295.3h0M569.6 300.2h0M567.8 299.3h0M569.6 299.7h0M582.6 297.0h0M570.1 297.0h0M566.4 302.5h0M558.5 289.0h0M551.4 284.7h0M567.8 293.0h0M555.8 287.6h0M561.3 290.9h0M557.9 288.3h0M559.3 289.8h0M567.0 293.6h0M568.8 293.3h0M555.8 288.2h0M565.2 293.2h0M570.6 295.2h0M559.4 288.3h0M560.2 289.4h0M727.4 249.4h0M724.6 248.0h0M721.8 246.8h0M725.4 249.2h0M721.9 246.8h0M725.8 280.1h0M722.1 274.6h0M728.6 276.0h0M727.0 275.6h0M731.4 273.5h0M726.9 273.4h0M725.0 273.3h0M727.4 274.7h0M733.3 278.2h0M726.9 275.9h0M729.6 276.4h0M728.6 274.9h0M749.7 283.3h0M750.4 284.1h0M737.1 279.5h0M737.4 281.1h0M744.6 282.6h0M738.8 279.0h0M742.8 281.3h0M756.3 284.9h0M739.3 281.2h0M740.1 280.3h0M744.7 282.8h0M740.5 281.5h0M755.0 284.6h0M740.5 280.3h0M730.0 360.8h0M727.9 362.1h0M722.7 361.1h0M730.5 362.7h0M718.1 357.8h0M715.9 357.3h0M729.1 362.6h0M724.9 361.5h0M730.3 363.2h0M727.6 362.2h0"/>
<path stroke="#ffffff" stroke-width="1.63" d="M549.2 110.9h0M559.9 112.5h0M557.4 112.1h0M546.8 112.6h0M552.1 111.8h0M553.3 111.7h0M545.7 110.7h0M554.8 111.4h0M642.4 218.2h0M641.3 215.6h0M643.9 221.8h0M644.1 221.6h0"/>
<path stroke="#ffffff" stroke-width="2.04" d="M594.3 130.7h0M587.2 151.7h0M595.4 129.5h0M584.0 154.6h0M599.1 128.9h0M585.4 155.6h0M585.8 153.2h0M593.6 140.1h0M587.9 135.9h0M599.5 131.7h0M594.7 131.1h0M589.3 141.3h0M589.9 145.6h0M591.7 139.6h0M598.3 139.9h0M591.3 150.0h0M593.6 144.0h0M598.9 127.8h0M585.2 156.1h0M592.5 154.7h0M593.3 139.1h0M588.7 147.0h0M594.7 126.6h0M594.3 130.4h0M592.9 136.9h0M595.2 130.3h0M596.2 128.7h0M586.1 155.5h0M588.5 146.1h0M591.3 136.6h0M589.1 136.5h0M581.6 158.6h0M592.5 141.7h0M595.7 128.5h0M593.3 137.1h0M590.3 129.0h0M593.7 124.8h0M596.2 130.5h0M587.4 143.0h0M584.7 159.1h0M587.3 155.4h0M594.5 138.5h0M594.6 130.7h0M590.8 153.3h0M592.3 136.3h0M580.6 157.9h0M585.1 154.3h0M592.5 152.4h0M596.7 133.8h0M596.9 126.1h0M597.0 126.1h0M586.7 148.6h0M591.2 160.4h0M583.2 158.9h0M586.7 158.8h0M592.9 132.5h0M593.6 131.5h0M582.8 155.3h0M590.6 155.7h0M586.9 152.8h0M599.0 129.0h0M592.4 154.0h0M589.6 151.8h0M587.3 152.5h0M590.9 135.9h0M598.7 141.1h0M588.3 137.7h0M596.3 131.4h0M592.3 128.3h0M582.8 151.7h0M591.9 129.0h0M595.5 150.2h0M594.1 137.7h0M597.2 125.6h0M587.2 159.6h0M569.5 177.0h0M572.1 175.3h0M566.2 180.7h0M566.4 181.0h0M566.3 180.8h0M570.8 176.2h0M570.3 176.7h0M569.9 177.5h0M553.6 218.7h0M551.0 209.7h0M554.2 218.3h0M554.3 220.0h0M553.5 216.8h0M553.1 216.6h0M555.0 221.3h0M553.4 217.8h0M554.3 219.3h0M554.1 211.7h0M554.8 213.6h0M553.5 209.8h0M556.2 217.6h0M556.1 217.6h0M553.4 208.2h0M556.8 220.2h0M555.8 216.2h0M555.9 218.2h0M556.4 211.2h0M555.8 208.5h0M556.0 210.6h0M558.5 218.6h0M557.2 213.1h0M557.7 214.5h0M558.5 216.6h0M558.2 217.1h0M556.5 211.2h0M561.0 217.7h0M557.4 206.9h0M557.9 207.5h0M560.4 217.1h0M560.7 216.7h0M559.5 213.6h0M559.4 213.7h0M558.2 209.7h0M562.0 221.3h0M561.9 212.7h0M563.3 218.2h0M561.1 209.8h0M560.6 209.0h0M562.5 214.5h0M560.9 207.8h0M560.5 207.8h0M563.9 218.0h0M563.0 216.3h0M547.2 234.0h0M535.0 238.0h0M543.9 231.9h0M547.6 219.5h0M546.5 221.4h0M533.8 253.2h0M544.8 227.3h0M543.7 224.1h0M539.2 230.3h0M535.7 248.5h0M534.6 239.8h0M541.4 239.3h0M533.9 243.4h0M540.3 234.3h0M536.7 246.2h0M549.2 220.3h0M531.5 251.7h0M541.7 230.1h0M544.1 229.2h0M548.9 229.7h0M538.2 242.6h0M540.1 231.7h0M545.5 223.9h0M532.2 251.1h0M539.6 236.1h0M528.1 253.2h0M540.4 234.3h0M546.6 221.0h0M542.0 230.2h0M543.8 227.3h0M537.0 238.1h0M543.5 234.1h0M543.3 234.1h0M543.3 230.6h0M548.6 220.6h0M542.6 220.7h0M542.4 237.7h0M547.6 227.1h0M544.2 228.0h0M539.6 233.7h0M602.0 286.9h0M603.6 287.0h0M606.3 291.3h0M604.5 288.3h0M602.6 285.2h0"/>
<path stroke="#ffffff" stroke-width="1.84" d="M598.0 129.3h0M597.9 129.7h0M595.1 131.1h0M594.6 130.8h0M595.6 130.5h0M595.0 131.6h0M599.0 130.5h0M595.8 132.1h0M596.3 131.3h0M596.5 131.8h0M595.1 134.5h0M592.2 135.2h0M594.1 135.0h0M592.9 135.0h0M595.0 134.5h0M592.0 137.9h0M593.8 137.8h0M593.9 137.2h0M592.9 136.9h0M594.0 136.7h0M592.1 141.1h0M591.9 141.6h0M593.9 140.2h0M594.3 140.1h0M594.5 140.5h0M588.5 145.1h0M589.1 145.0h0M588.2 145.0h0M591.9 143.2h0M588.6 145.0h0M593.6 143.9h0M588.9 146.7h0M590.5 145.6h0M593.9 144.3h0M590.1 145.7h0M586.9 149.9h0M586.2 150.8h0M588.8 149.2h0M587.7 149.8h0M589.1 149.0h0M590.8 151.4h0M585.2 153.8h0M589.6 152.0h0M586.4 153.5h0M590.5 151.8h0M584.4 156.6h0M586.9 154.9h0M584.2 156.8h0M585.7 155.8h0M584.1 156.8h0M775.8 201.0h0M778.3 201.2h0M779.8 201.9h0M782.0 202.5h0M784.1 203.9h0M785.7 204.2h0M787.7 205.1h0M789.6 205.9h0M791.6 206.3h0M793.6 206.8h0M795.7 207.6h0M797.4 208.7h0M798.9 210.4h0M801.8 210.3h0M803.4 210.5h0M806.0 210.5h0M807.4 211.7h0M809.3 212.9h0M811.2 214.5h0M813.6 214.5h0M815.4 215.6h0M817.3 215.5h0M819.2 216.5h0M821.6 217.4h0M823.6 218.0h0M825.3 218.9h0"/>
<path stroke="#ffffff" stroke-width="1.90" d="M575.6 168.5h0M575.4 171.5h0M573.1 169.8h0M572.3 175.3h0M576.8 164.0h0M573.5 168.9h0M572.0 176.6h0M578.7 169.6h0M576.4 166.2h0M570.7 183.4h0M568.7 182.9h0M575.7 173.9h0M567.8 186.6h0M573.5 171.5h0M572.9 179.4h0M574.0 173.4h0M576.3 166.8h0M577.3 165.7h0M577.2 168.2h0M575.8 165.4h0M573.0 180.3h0M575.0 170.5h0M549.2 224.0h0M547.5 224.7h0M549.2 223.5h0M540.2 227.8h0M544.4 226.5h0M548.9 223.8h0M550.2 223.5h0M541.8 227.2h0M548.0 226.1h0M546.2 226.5h0M543.4 228.0h0M546.5 226.8h0M541.4 229.4h0M541.9 228.5h0M540.3 229.4h0M545.9 227.5h0M541.4 230.4h0M539.4 231.4h0M542.1 230.7h0M541.1 230.9h0M544.4 229.1h0M541.0 230.4h0M539.5 231.5h0M543.1 230.9h0M539.5 234.0h0M537.8 234.6h0M540.8 233.9h0M536.4 235.4h0M538.3 234.2h0M537.6 235.2h0M541.6 233.3h0M537.5 234.7h0M540.7 237.0h0M540.3 237.4h0M536.6 239.1h0M535.6 239.0h0M535.8 238.6h0M541.8 236.8h0M535.2 239.1h0M541.9 236.6h0M533.6 240.6h0M539.6 239.1h0M538.6 239.8h0M535.6 240.3h0M534.8 241.1h0M533.5 241.0h0M537.8 239.2h0M535.7 240.5h0M533.5 243.1h0M532.9 244.5h0M538.3 241.7h0M537.4 242.3h0M537.2 242.0h0M535.0 243.0h0M534.4 243.4h0M534.2 243.2h0M532.5 247.6h0M529.8 248.1h0M530.2 249.1h0M531.5 248.1h0M534.8 246.7h0M531.5 247.7h0M536.1 245.8h0M534.5 246.5h0M528.8 250.6h0M533.4 247.9h0M536.2 247.7h0M532.4 249.0h0M536.3 247.7h0M530.6 249.7h0M531.8 248.5h0M530.2 250.0h0M534.9 251.1h0M529.8 252.7h0M529.8 252.8h0M527.7 254.5h0M528.7 253.6h0M527.3 254.0h0M527.0 254.1h0M536.4 250.3h0M548.6 215.1h0M550.9 214.1h0M552.9 213.0h0M550.1 214.4h0M552.0 213.3h0M554.2 212.2h0M552.7 213.7h0M547.9 217.8h0M550.8 216.2h0M546.8 218.1h0M546.0 218.4h0M547.2 217.3h0M548.1 217.7h0M546.6 217.9h0M550.7 220.6h0M549.2 221.2h0M549.3 221.0h0M544.5 222.8h0M543.2 223.8h0M547.3 222.5h0M549.9 220.2h0M557.0 270.8h0M557.5 270.5h0M563.0 272.2h0M558.4 270.1h0M553.3 269.2h0M563.0 272.0h0M560.0 271.1h0M555.6 269.9h0M550.4 268.3h0M634.1 171.3h0M611.3 162.5h0M616.3 164.8h0M611.5 163.1h0M624.6 168.0h0M634.9 172.2h0M626.0 168.9h0M623.6 167.1h0M614.9 163.6h0M618.2 165.6h0M633.5 171.6h0M630.8 170.4h0M632.4 171.0h0M630.0 169.3h0M621.9 167.2h0M615.9 165.1h0M610.9 163.1h0M618.9 165.9h0M632.7 170.3h0M628.9 169.6h0M610.4 228.5h0M606.5 222.3h0M593.0 220.4h0M590.9 218.3h0M604.9 221.8h0M602.9 224.0h0M608.6 224.6h0M604.1 223.8h0M605.8 222.2h0M601.1 220.9h0M602.0 222.8h0M586.9 215.2h0M585.9 213.5h0M587.4 216.1h0M589.2 214.9h0M584.8 215.9h0M602.5 222.6h0M604.5 222.9h0M601.8 221.0h0M594.7 219.4h0M611.1 223.3h0M585.9 216.4h0M612.5 224.0h0M587.9 215.1h0M585.7 214.6h0M608.4 225.7h0M609.0 222.9h0M602.8 221.9h0M587.4 215.4h0M606.0 224.1h0M596.3 220.4h0M585.6 213.7h0M604.5 224.3h0M596.0 217.0h0M597.6 223.4h0M609.0 224.7h0M596.7 218.8h0M597.1 219.6h0M459.3 185.2h0M464.7 172.2h0M457.4 188.2h0M464.4 172.4h0M461.6 178.2h0M455.8 193.1h0M459.1 185.7h0M456.3 193.0h0M459.1 185.8h0M458.2 187.8h0M459.0 185.4h0M458.4 187.1h0M460.3 182.0h0M463.1 175.5h0M464.2 171.9h0M459.0 187.0h0M460.9 179.8h0M466.4 173.6h0M465.7 174.6h0M464.1 177.7h0M462.0 182.9h0M462.9 181.1h0M467.8 167.8h0M462.4 181.2h0M459.3 189.9h0M464.6 176.6h0M461.8 181.4h0M464.0 178.9h0M464.1 177.1h0M466.2 172.2h0M467.0 170.7h0M461.6 184.0h0M467.2 169.9h0M459.8 188.7h0M471.8 164.8h0M465.2 181.5h0M469.7 168.6h0M465.0 180.9h0M463.9 184.3h0M466.1 179.0h0M465.9 181.1h0M469.3 170.2h0M462.8 186.8h0M471.8 164.7h0M465.7 179.5h0M469.1 171.7h0M464.8 181.2h0M466.8 175.5h0M471.6 165.9h0M467.5 174.5h0M465.2 180.0h0M468.5 179.3h0M469.3 179.2h0M467.4 182.8h0M465.9 186.7h0M472.7 171.1h0M474.2 165.2h0M467.2 183.9h0M472.6 172.1h0M467.6 184.2h0M469.5 178.4h0M466.3 185.2h0M471.7 173.0h0M466.8 185.7h0M467.3 183.4h0M472.6 170.2h0M471.5 174.3h0M466.8 185.4h0M720.6 338.8h0M725.5 339.7h0M726.9 340.6h0M718.5 336.5h0M717.6 337.0h0M723.5 340.2h0M732.3 343.3h0M726.6 340.4h0M718.6 336.3h0M734.8 343.9h0M731.9 342.4h0M723.1 340.2h0"/>
<path stroke="#ffffff" stroke-width="2.18" d="M561.5 199.6h0M560.0 193.1h0M561.1 198.2h0M559.9 193.6h0M560.7 196.0h0M562.2 200.5h0M562.0 201.5h0M562.0 202.3h0M561.1 197.2h0M562.7 205.9h0M587.3 282.0h0M586.9 283.5h0M586.9 282.1h0M587.0 286.3h0M587.1 288.8h0M586.8 287.8h0M586.2 282.5h0M588.0 284.4h0M801.4 301.7h0M801.7 303.8h0M800.5 297.2h0M800.9 297.9h0M801.1 302.0h0M801.8 302.9h0"/>
<path stroke="#bdbdbd" stroke-width="1.63" d="M525.5 271.3h0M519.8 266.3h0M522.7 268.8h0M520.1 266.8h0M525.1 272.0h0M520.3 266.0h0M584.1 187.8h0M582.6 189.6h0M585.6 185.1h0M589.3 178.2h0M588.5 178.3h0M629.3 152.9h0M631.4 154.6h0M630.6 153.8h0M633.8 170.9h0M630.5 166.4h0M631.7 167.3h0M568.7 271.1h0M570.3 268.7h0M568.5 269.8h0M568.8 272.8h0M569.4 269.8h0M574.2 272.2h0M574.7 273.1h0M573.2 272.1h0M574.7 266.3h0M572.0 270.2h0M591.7 275.2h0M582.3 269.6h0M592.0 274.6h0M580.1 267.7h0M570.5 268.2h0M586.3 272.8h0M585.5 272.5h0M587.1 274.4h0M595.7 276.4h0M583.7 269.3h0M569.8 266.6h0M588.7 273.2h0M592.6 274.8h0M579.4 268.7h0M589.7 274.7h0M575.1 267.2h0M583.8 272.6h0M591.5 274.5h0M500.6 216.0h0M500.8 219.5h0M546.6 304.1h0M535.6 299.9h0M532.8 298.2h0M535.2 299.5h0M533.2 298.7h0M545.8 303.4h0M533.9 300.2h0M534.8 299.6h0M550.3 305.9h0M533.3 297.9h0M549.1 279.3h0M566.0 286.1h0M548.2 279.4h0M550.9 279.3h0M547.8 279.6h0M551.8 279.5h0M555.6 283.0h0M558.4 283.2h0M550.2 280.8h0M560.2 286.1h0M547.9 291.4h0M554.1 293.8h0M552.5 292.9h0M554.0 294.1h0M555.5 294.6h0M548.4 290.4h0M546.0 290.3h0M556.1 293.7h0M566.8 211.4h0M569.2 216.8h0M569.1 217.0h0M569.2 217.4h0M540.8 287.5h0M542.3 287.3h0M541.4 286.4h0M549.1 291.8h0M550.3 292.9h0M542.0 287.9h0M541.9 286.5h0M747.6 281.1h0M742.1 280.3h0M746.7 280.2h0M749.5 281.2h0M745.3 279.8h0M744.6 279.4h0M760.3 213.2h0M759.5 212.8h0M760.1 212.8h0M752.6 213.4h0M760.0 212.6h0M757.0 213.8h0M771.3 218.9h0M771.2 217.2h0M771.9 219.8h0M779.6 222.5h0M781.6 223.7h0M777.4 222.5h0M773.7 222.1h0M772.8 222.6h0M726.4 355.4h0M725.6 354.9h0M721.9 353.5h0M727.3 355.9h0M724.5 354.9h0M727.2 355.3h0M693.4 365.9h0M691.0 365.9h0M697.2 368.9h0M699.9 369.7h0M697.4 369.1h0M681.5 362.5h0M694.3 367.9h0M699.8 369.8h0M683.8 364.2h0M699.4 369.8h0"/>
<path stroke="#ff1a1a" stroke-width="2.86" d="M617.6 227.7h0M619.1 226.3h0M616.1 224.7h0M617.1 229.0h0M617.2 227.4h0M616.0 226.9h0M614.0 228.5h0M615.6 224.6h0M615.1 225.1h0M617.7 228.5h0M614.1 228.3h0M617.7 225.6h0M613.9 225.3h0M615.3 227.2h0M701.2 348.5h0M703.2 359.9h0M682.3 349.1h0M709.1 361.0h0M699.4 364.4h0M708.9 356.1h0M689.3 345.6h0M688.0 341.3h0M704.1 351.7h0M690.1 347.5h0M679.9 348.1h0M710.8 360.8h0M692.8 346.6h0M688.2 347.2h0M683.5 346.1h0M706.5 356.1h0M691.0 351.9h0"/>
<path stroke="#20e060" stroke-width="3.12" d="M620.8 228.4h0"/>
<path stroke="#8a8a8a" stroke-width="1.63" d="M581.4 274.4h0M584.0 271.6h0M582.7 269.1h0M585.6 271.0h0M575.8 271.8h0M587.0 271.6h0M565.4 269.8h0M581.2 273.0h0M575.4 272.4h0M585.6 273.0h0M569.4 269.6h0M576.1 269.9h0M580.1 274.9h0M580.5 268.2h0M572.1 273.5h0M574.8 270.9h0M590.5 276.3h0M591.4 268.2h0M592.8 271.7h0M588.8 271.9h0M589.4 272.1h0M582.5 271.5h0M576.4 272.1h0M587.9 268.6h0M582.9 268.9h0M574.2 267.2h0M594.2 272.7h0M580.1 275.3h0M568.6 272.4h0M578.2 274.2h0M573.4 272.5h0M582.1 276.5h0M578.9 272.0h0M585.2 273.5h0M586.0 272.5h0M575.6 276.0h0M594.4 272.5h0M577.9 275.4h0M575.9 272.9h0M571.8 276.4h0M715.5 265.1h0M717.6 266.8h0M718.5 269.1h0M719.5 271.3h0M721.8 273.1h0M721.7 275.6h0M722.7 277.9h0M724.2 279.9h0M725.0 282.2h0M724.9 284.6h0M725.4 286.9h0M726.7 289.1h0M726.6 291.5h0M725.9 293.8h0M727.7 296.2h0M727.6 298.6h0M727.4 301.0h0M726.2 303.2h0M725.2 305.5h0M724.8 307.8h0M724.9 310.3h0M723.3 312.3h0M721.7 314.3h0M721.7 316.9h0M720.5 319.1h0M718.3 320.8h0M716.9 322.8h0M716.0 325.2h0M713.4 326.6h0M712.4 328.9h0M781.6 302.9h0M780.7 305.8h0M781.1 308.9h0M780.0 311.8h0M778.6 314.6h0M778.2 317.6h0M777.0 320.4h0M771.0 291.0h0M814.8 287.0h0M803.0 297.0h0M730.6 206.7h0M754.5 355.7h0M763.4 353.0h0"/>
<path stroke="#8a8a8a" stroke-width="1.50" d="M500.0 181.0h0M501.5 216.6h0M757.0 353.5h0"/>
<path stroke="#8a8a8a" stroke-width="1.77" d="M508.5 256.0h0M513.0 256.5h0M512.0 267.0h0M536.6 272.5h0M539.3 282.0h0M532.3 286.3h0M530.5 297.7h0M536.6 300.3h0M527.0 263.0h0M534.0 262.0h0M524.0 279.0h0M530.0 291.0h0M542.0 291.0h0"/>
<path stroke="#ffffff" stroke-width="2.31" d="M547.4 283.7h0M547.8 283.9h0M547.7 283.8h0M775.2 363.8h0M776.1 362.8h0M775.3 363.8h0M775.5 364.7h0M777.1 362.1h0"/>
<path stroke="#24e05a" stroke-width="3.25" d="M606.1 316.7h0M603.9 311.4h0M601.2 306.3h0M599.5 300.9h0M600.1 295.3h0M599.6 289.7h0M602.0 284.4h0M603.3 279.0h0M606.2 274.0h0M610.5 269.7h0M613.6 264.7h0M617.9 260.4h0M623.4 257.1h0M629.4 254.3h0M635.0 251.1h0M641.7 249.6h0M648.2 247.6h0"/>
<path stroke="#24e05a" stroke-width="2.99" d="M715.5 285.5h0M716.3 281.8h0M719.7 290.1h0M684.8 337.1h0M706.6 324.2h0M688.0 334.0h0M715.5 283.0h0M702.8 325.9h0"/>
<path stroke="#24e05a" stroke-width="2.34" d="M655.0 246.3h0M661.6 245.4h0M668.3 245.9h0M674.6 247.8h0M681.0 249.1h0M687.4 250.7h0"/>
<path stroke="#ffffff" stroke-width="1.97" d="M715.3 259.1h0M718.3 259.2h0M718.8 260.8h0M720.5 261.7h0M720.9 263.3h0M721.8 264.6h0M721.8 266.4h0M723.1 267.5h0M724.4 268.6h0M725.7 269.8h0M725.8 271.5h0M727.5 272.5h0M728.2 273.9h0M729.0 275.3h0M729.7 276.7h0M730.3 278.2h0M730.0 279.8h0M731.2 281.2h0M731.4 282.7h0M732.0 284.1h0M730.8 285.8h0M732.0 287.2h0M731.9 288.7h0M732.2 290.2h0M732.6 291.7h0M732.6 293.2h0M732.8 294.7h0M732.2 296.3h0M732.0 297.7h0M732.5 299.3h0M732.0 300.8h0M732.5 302.3h0M732.2 303.8h0M732.3 305.4h0M730.8 306.7h0M731.0 308.3h0M730.5 309.7h0M730.0 311.2h0M728.7 312.5h0M730.0 314.4h0M728.3 315.6h0M728.4 317.2h0M726.3 318.2h0M726.1 319.8h0M725.7 321.3h0M724.3 322.4h0M723.4 323.8h0M722.1 324.9h0M722.5 326.9h0M720.8 327.9h0M719.1 328.8h0M718.2 330.2h0M716.5 331.0h0M716.1 332.7h0M714.4 333.6h0M712.9 334.6h0M712.0 336.0h0M711.7 337.9h0M709.1 337.9h0M707.4 338.7h0M749.8 191.9h0M768.8 198.6h0M747.2 190.2h0M757.2 193.7h0M749.1 190.3h0M736.7 186.7h0M746.7 190.4h0M763.2 196.7h0M746.1 188.4h0M765.4 198.2h0M770.1 199.1h0M745.5 189.4h0M735.4 185.6h0M748.8 189.8h0M751.2 191.1h0M744.6 188.3h0M769.0 197.5h0M741.1 189.3h0M738.3 188.6h0M763.5 195.5h0M735.5 186.8h0M742.1 188.8h0M746.5 190.0h0M746.7 190.5h0M759.9 195.8h0M756.8 195.6h0M763.4 196.3h0M761.7 196.7h0M747.7 192.5h0M765.8 197.2h0M745.2 191.5h0M758.7 195.1h0M735.9 186.4h0M766.3 197.8h0M742.2 190.0h0M737.8 186.3h0M762.9 194.9h0M767.7 198.8h0M744.9 191.6h0M751.0 193.1h0M772.3 199.0h0M768.5 196.7h0M759.8 194.7h0M762.6 196.1h0M752.3 190.1h0M739.3 187.4h0"/>
<path stroke="#ff1a1a" stroke-width="2.99" d="M718.3 248.8h0M720.4 249.0h0M712.3 247.2h0M721.1 249.5h0M716.5 249.3h0M702.2 243.0h0M716.5 250.4h0M709.4 247.4h0M713.6 248.6h0M716.4 250.0h0M707.7 245.6h0M701.7 243.5h0M709.4 247.1h0M702.2 244.3h0M711.6 247.9h0M705.8 246.1h0M699.5 330.5h0M712.0 335.1h0M709.8 334.5h0M717.9 336.4h0M704.1 333.2h0M705.0 333.5h0M701.9 332.2h0M712.0 335.3h0M711.5 335.6h0M705.9 332.8h0M709.0 334.2h0M709.7 334.5h0M701.6 332.5h0M716.4 336.7h0M715.7 336.8h0M702.9 333.5h0"/>
<path stroke="#ffffff" stroke-width="1.50" d="M700.9 243.2h0M709.0 245.8h0M715.3 247.0h0M700.2 242.7h0M712.6 247.9h0M714.6 247.6h0M712.0 247.2h0M706.0 244.3h0"/>
<path stroke="#ff2020" stroke-width="2.86" d="M722.2 273.2h0M723.8 270.5h0M729.0 274.2h0M728.9 271.4h0M727.8 271.3h0M729.8 276.1h0M734.5 277.8h0M725.8 272.6h0M725.3 274.9h0M735.2 276.1h0M721.0 270.2h0M724.1 275.5h0M728.5 274.9h0M734.6 271.5h0M725.6 279.9h0M729.7 271.7h0M721.6 269.4h0M720.2 274.2h0M728.7 277.0h0M728.0 271.9h0"/>
<path stroke="#24e05a" stroke-width="2.60" d="M737.8 258.8h0M703.8 327.2h0M699.3 328.7h0M696.3 331.3h0M693.3 334.1h0M689.5 336.1h0M684.0 353.0h0M693.0 357.0h0M703.0 352.0h0M711.0 360.0h0M700.0 362.0h0M689.0 346.0h0"/>
<path stroke="#24e05a" stroke-width="1.82" d="M734.5 258.3h0"/>
<path stroke="#bdbdbd" stroke-width="1.90" d="M807.1 305.6h0M810.0 307.2h0M813.2 308.0h0M816.1 309.8h0M819.6 311.5h0M822.6 311.4h0M825.9 313.1h0M828.9 315.1h0M831.9 316.5h0"/>
<path stroke="#ff1a1a" stroke-width="2.60" d="M682.0 347.3h0M695.8 351.7h0M684.5 345.0h0M714.6 359.8h0M706.4 361.9h0M711.3 346.3h0M707.3 358.4h0M704.3 353.3h0M678.6 346.1h0M683.7 337.6h0M680.0 340.2h0M697.3 355.2h0M687.7 346.5h0M713.0 364.7h0M702.0 356.0h0M686.6 343.6h0M687.1 345.6h0M708.5 353.2h0M683.4 344.2h0"/>
<path stroke="#ffffff" stroke-width="2.99" d="M680.9 342.7h0M691.6 348.0h0M680.0 344.9h0M692.7 349.5h0M704.1 349.7h0M684.5 342.7h0M700.6 351.6h0"/>
<path stroke="#ff4a3a" stroke-width="2.60" d="M687.7 342.4h0M689.0 351.0h0M685.2 352.0h0"/>
<path stroke="#ff4a3a" stroke-width="2.86" d="M710.1 355.4h0M700.7 351.2h0M688.5 342.9h0M708.0 358.3h0M696.0 355.9h0M689.8 342.5h0"/>
<path stroke="#ffffff" stroke-width="2.72" d="M697.1 353.2h0M692.7 348.8h0M683.5 343.8h0M690.2 342.1h0M693.6 341.4h0M683.7 351.6h0M686.1 337.2h0M705.2 358.0h0"/>
<path stroke="#bdbdbd" stroke-width="1.70" d="M667.5 355.6h0M676.2 359.8h0M693.0 365.2h0M678.9 360.4h0M688.4 363.7h0M675.9 358.6h0M698.8 367.7h0M687.8 363.5h0M662.5 354.3h0M685.4 363.3h0M690.6 364.8h0M698.7 367.8h0M664.3 355.5h0M701.5 370.0h0M683.4 362.4h0M684.2 362.3h0M714.0 375.4h0M716.6 376.6h0M719.1 377.2h0M722.0 379.0h0M724.4 379.6h0M726.5 380.9h0M728.9 381.8h0M731.8 383.2h0M734.2 384.0h0M736.4 384.1h0M865.0 395.3h0M875.5 398.8h0M873.3 398.2h0M874.1 398.1h0M862.0 395.0h0M868.5 397.3h0M873.8 398.5h0M867.8 396.5h0"/>
<path stroke="#24e05a" stroke-width="1.95" d="M677.8 355.8h0M683.5 356.3h0M689.7 358.3h0M668.2 351.9h0M680.7 356.5h0M675.7 354.6h0M679.5 355.1h0M682.2 355.5h0"/>
<path stroke="#6a6a6a" stroke-width="1.63" d="M745.8 368.2h0M748.7 368.9h0M753.2 370.8h0M756.6 372.0h0M759.4 373.0h0M762.5 375.4h0M766.2 376.4h0M770.0 378.1h0M773.2 380.1h0M776.6 381.1h0M779.3 383.1h0M783.1 384.0h0"/>
</g>
<g fill="none" stroke-linecap="round">
<path stroke="#ff0a0a" stroke-width="2.8" d="M669.9 329.7h0M665.0 326.1h0M664.1 334.1h0M663.6 333.1h0M668.6 332.0h0M662.5 332.1h0M661.2 330.7h0M666.4 337.5h0M662.8 329.9h0M667.5 334.6h0M665.8 330.9h0M661.4 330.4h0M666.1 334.0h0M662.8 334.3h0M661.0 328.9h0M663.0 331.5h0M664.8 330.8h0M665.8 333.0h0M667.4 329.7h0M663.4 331.9h0M664.4 334.4h0M671.5 330.6h0M670.6 328.1h0M663.8 331.9h0M663.7 330.7h0M658.5 330.7h0M663.8 332.7h0M664.4 334.0h0M662.1 329.8h0M665.2 328.4h0"/>
<path stroke="#ff7a00" stroke-width="3.0" d="M648.3 244.8h0M649.9 244.3h0M649.8 246.4h0M651.7 249.2h0M653.3 249.1h0M631.0 251.6h0M636.6 250.5h0M641.3 250.6h0M647.1 250.6h0M656.2 250.7h0M663.9 251.3h0M635.0 252.5h0M637.7 253.0h0M654.0 253.3h0M656.0 253.7h0M677.6 253.3h0M683.5 252.9h0M641.7 255.4h0M642.9 255.0h0M666.4 255.6h0M639.6 256.5h0M646.0 256.6h0M647.7 256.6h0M651.2 256.9h0M670.6 257.8h0M693.3 257.5h0M628.3 259.0h0M637.0 259.8h0M643.0 259.7h0M645.4 258.7h0M626.9 261.8h0M636.7 261.4h0M641.9 260.8h0M693.3 261.0h0M638.7 263.6h0M685.4 264.0h0M687.0 263.1h0M691.8 263.3h0M613.9 266.0h0M616.8 265.4h0M619.0 265.1h0M637.4 265.1h0M664.8 265.6h0M669.0 265.9h0M684.0 265.6h0M691.5 265.1h0M611.4 268.3h0M622.7 267.0h0M649.2 268.1h0M654.0 268.0h0M656.5 267.7h0M658.8 267.6h0M681.8 268.0h0M687.7 267.1h0M612.0 270.4h0M614.7 269.3h0M616.9 269.9h0M618.0 269.2h0M645.6 269.4h0M648.2 269.8h0M659.7 269.7h0M670.3 270.4h0M681.0 270.0h0M701.9 270.1h0M607.8 272.2h0M610.5 271.8h0M612.4 272.5h0M614.3 272.0h0M616.6 272.2h0M624.3 271.2h0M626.9 271.7h0M628.7 272.1h0M650.0 271.6h0M651.3 271.4h0M662.8 272.0h0M666.6 272.2h0M702.1 271.3h0M706.7 271.9h0M708.4 271.7h0M607.6 273.5h0M614.1 274.4h0M616.0 273.6h0M621.0 274.5h0M622.8 273.7h0M624.9 274.6h0M648.2 274.5h0M675.6 273.5h0M704.1 274.5h0M610.0 276.8h0M614.2 276.2h0M624.3 275.5h0M673.1 275.9h0M674.6 276.3h0M677.2 275.8h0M626.1 278.4h0M637.6 278.3h0M638.9 278.8h0M677.2 277.9h0M679.8 278.8h0M698.6 277.7h0M699.6 277.5h0M627.3 280.3h0M639.3 280.0h0M681.4 279.7h0M685.9 280.0h0M695.8 279.8h0M698.8 279.7h0M683.0 282.8h0M694.6 282.6h0M698.1 282.9h0M603.5 284.9h0M631.1 284.8h0M683.0 284.5h0M636.7 286.0h0M665.1 286.7h0M666.6 286.5h0M684.0 286.6h0M683.7 288.1h0M687.5 288.1h0M616.2 290.8h0M633.2 290.9h0M683.7 290.8h0M687.0 291.2h0M691.5 290.2h0M633.7 292.5h0M634.9 293.2h0M692.5 292.7h0M608.1 294.9h0M611.3 294.9h0M624.2 294.4h0M631.4 294.7h0M633.1 295.0h0M691.9 295.2h0M627.1 297.0h0M630.5 297.0h0M632.9 297.4h0M639.6 297.3h0M692.1 297.3h0M601.6 299.3h0M607.4 298.8h0M612.5 299.6h0M620.4 299.1h0M624.9 299.1h0M654.4 301.4h0M671.0 301.4h0M605.4 302.7h0M671.0 302.9h0M672.6 303.1h0M674.7 303.7h0M618.8 305.1h0M628.5 305.6h0M643.1 305.3h0M658.4 305.0h0M616.1 306.9h0M630.3 307.0h0M665.9 307.6h0M647.8 310.3h0M651.4 310.1h0M658.1 312.3h0M665.0 311.4h0M669.1 312.0h0M616.9 314.5h0M617.9 313.4h0M617.8 318.2h0M622.5 318.5h0M627.3 318.0h0M658.0 317.8h0M666.6 317.9h0M647.2 319.8h0M666.6 320.1h0M668.5 323.0h0M666.5 324.4h0M668.6 324.6h0M643.2 325.9h0M655.6 330.5h0M649.5 332.4h0M673.3 333.4h0"/>
<path stroke="#22e83a" stroke-width="3.0" d="M658.2 257.5h0M660.9 257.8h0M663.1 256.9h0M664.0 257.8h0M666.0 257.1h0M647.9 259.8h0M649.9 258.7h0M654.2 259.6h0M655.8 259.2h0M658.0 258.7h0M662.3 259.8h0M663.9 259.0h0M670.8 258.7h0M648.4 261.9h0M649.4 261.9h0M654.2 261.0h0M655.8 260.7h0M662.3 261.1h0M664.8 261.2h0M666.7 261.8h0M668.6 261.7h0M670.2 261.1h0M673.4 260.9h0M647.4 264.0h0M650.2 263.2h0M664.2 263.4h0M666.0 263.7h0M668.3 263.2h0M670.2 263.2h0M673.5 263.2h0M674.4 263.3h0M645.2 266.3h0M648.1 265.2h0M649.7 264.9h0M651.4 265.2h0M671.4 265.7h0M672.7 265.7h0M644.1 268.0h0M645.9 268.0h0M641.6 269.6h0M643.1 269.5h0M664.0 272.5h0M694.5 272.0h0M656.1 273.7h0M658.0 274.6h0M660.2 273.6h0M663.1 274.7h0M664.0 273.6h0M666.9 273.8h0M668.7 274.3h0M689.3 273.8h0M691.3 274.3h0M693.9 273.7h0M695.7 273.5h0M657.6 276.3h0M660.8 276.7h0M662.5 275.9h0M664.6 276.2h0M666.1 276.2h0M668.7 275.7h0M670.7 276.6h0M689.4 276.1h0M691.7 275.7h0M693.4 276.7h0M648.0 277.9h0M657.9 277.7h0M660.1 277.7h0M662.9 278.9h0M664.4 277.8h0M667.1 278.7h0M668.3 277.9h0M670.8 277.7h0M672.5 278.1h0M674.5 277.7h0M644.9 279.8h0M647.9 280.6h0M649.6 280.4h0M651.4 280.5h0M654.4 280.7h0M656.2 280.4h0M657.5 280.0h0M660.2 279.7h0M661.8 280.9h0M664.8 280.4h0M666.9 280.8h0M668.9 280.2h0M670.6 281.0h0M673.5 279.8h0M643.5 282.5h0M648.2 282.9h0M649.6 281.8h0M651.9 281.7h0M654.2 282.4h0M656.4 282.9h0M658.5 282.7h0M660.1 282.7h0M662.6 282.0h0M665.0 282.4h0M666.6 282.0h0M669.2 282.4h0M671.1 282.9h0M672.9 282.5h0M674.9 282.0h0M701.9 282.7h0M642.9 283.9h0M647.2 283.9h0M650.5 284.0h0M651.6 284.1h0M653.6 283.8h0M656.0 284.9h0M657.6 284.5h0M659.8 284.9h0M671.3 284.2h0M673.2 284.5h0M674.6 284.5h0M679.3 284.5h0M702.3 283.9h0M644.9 285.9h0M647.2 287.2h0M649.7 286.2h0M651.3 286.8h0M653.7 286.2h0M656.0 286.9h0M671.1 286.5h0M672.8 286.9h0M674.6 286.4h0M679.7 286.3h0M702.7 287.1h0M707.1 287.0h0M708.6 286.5h0M641.5 289.4h0M643.0 288.3h0M645.2 288.1h0M647.0 289.3h0M650.4 288.1h0M652.4 288.8h0M653.6 289.2h0M655.6 288.9h0M658.4 289.0h0M669.4 288.6h0M670.9 288.5h0M673.4 288.3h0M690.1 289.4h0M701.7 288.8h0M706.3 288.4h0M707.9 288.6h0M641.8 291.3h0M643.1 291.0h0M645.6 290.9h0M647.1 290.4h0M652.3 290.6h0M654.1 290.7h0M656.2 290.5h0M658.0 291.4h0M660.8 290.3h0M661.9 291.3h0M669.3 290.3h0M671.3 290.5h0M672.3 290.5h0M675.0 291.2h0M677.2 291.5h0M678.8 290.6h0M681.4 290.9h0M701.9 290.3h0M707.2 290.6h0M712.4 291.4h0M641.9 292.9h0M643.5 292.4h0M646.2 293.0h0M647.9 292.8h0M656.1 293.1h0M658.8 293.1h0M661.0 292.6h0M662.9 293.3h0M668.0 293.4h0M670.7 293.0h0M672.8 293.4h0M677.3 292.5h0M679.8 292.4h0M700.0 292.2h0M702.5 292.7h0M703.9 292.7h0M706.7 293.2h0M641.9 295.2h0M643.2 295.0h0M647.4 294.5h0M658.7 295.3h0M659.9 294.5h0M661.9 295.0h0M664.7 295.3h0M666.2 295.5h0M669.3 295.0h0M670.3 294.5h0M675.2 295.3h0M704.3 295.0h0M706.5 294.4h0M658.6 297.4h0M659.7 297.2h0M662.6 296.7h0M664.3 297.1h0M666.3 296.5h0M668.4 297.0h0M675.7 297.1h0M677.3 296.4h0M704.0 297.1h0M707.9 297.2h0M710.1 297.6h0M655.9 299.2h0M658.1 299.3h0M660.0 299.2h0M663.0 298.8h0M664.4 299.1h0M666.5 299.0h0M681.5 299.9h0M683.3 299.8h0M685.5 299.5h0M687.8 299.6h0M689.9 299.5h0M692.1 298.9h0M694.4 299.4h0M696.0 299.4h0M700.8 298.8h0M702.1 299.3h0M704.4 298.6h0M706.2 299.6h0M710.1 299.9h0M677.6 301.2h0M678.8 301.3h0M681.2 301.5h0M682.8 301.0h0M684.9 300.8h0M690.1 301.1h0M692.3 301.3h0M694.5 301.1h0M695.8 300.8h0M698.5 301.4h0M700.8 301.3h0M708.0 301.9h0M711.4 300.7h0M679.8 303.5h0M681.9 303.3h0M682.9 302.8h0M686.1 302.7h0M687.0 303.5h0M689.6 302.8h0M691.6 303.5h0M693.4 303.2h0M695.6 303.4h0M698.6 303.5h0M700.6 303.8h0M701.6 302.8h0M706.4 303.9h0M708.3 303.4h0M712.5 303.9h0M679.5 305.7h0M680.8 305.6h0M683.3 305.5h0M685.5 305.5h0M687.7 305.2h0M689.2 306.2h0M692.2 305.2h0M694.4 305.9h0M695.8 305.2h0M697.7 304.8h0M699.8 306.1h0M703.0 305.7h0M705.1 304.9h0M706.6 306.2h0M708.3 304.8h0M711.3 305.7h0M712.2 306.0h0M677.4 307.2h0M679.7 307.9h0M681.7 307.9h0M683.0 308.3h0M685.8 308.2h0M687.3 307.3h0M690.2 308.3h0M692.1 307.1h0M693.6 307.7h0M695.3 307.4h0M704.0 307.3h0M706.7 307.2h0M712.8 308.2h0M675.3 310.0h0M676.7 309.8h0M679.5 309.8h0M681.4 309.4h0M683.1 309.4h0M685.5 309.6h0M687.2 309.1h0M690.4 309.5h0M702.3 309.9h0M704.7 310.0h0M672.6 311.9h0M674.7 312.1h0M676.7 312.0h0M678.8 312.1h0M681.8 312.3h0M683.3 312.4h0M685.0 311.6h0M687.3 311.6h0M689.1 311.6h0M691.9 312.2h0M693.8 312.4h0M702.0 312.0h0M704.7 311.2h0M706.8 312.4h0M710.6 312.4h0M666.4 313.7h0M673.5 313.3h0M674.6 314.1h0M677.4 313.5h0M679.0 314.6h0M681.9 313.7h0M683.7 314.6h0M685.7 313.8h0M688.2 314.0h0M689.9 314.5h0M691.2 313.4h0M700.1 313.9h0M702.1 314.5h0M704.7 313.3h0M706.7 314.5h0M675.4 316.4h0M676.7 316.6h0M678.6 315.6h0M681.4 316.3h0M683.6 316.2h0M685.8 315.9h0M687.0 315.7h0M689.8 316.3h0M696.0 315.9h0M697.5 315.8h0M700.9 316.0h0M702.2 316.2h0M704.0 315.9h0M706.1 316.0h0M708.6 316.4h0M676.4 318.6h0M678.7 318.6h0M680.7 317.6h0M683.7 318.3h0M685.8 317.6h0M687.7 318.6h0M690.1 318.6h0M692.1 318.5h0M696.1 318.5h0M697.7 317.8h0M700.7 317.7h0M701.8 318.5h0M705.1 317.6h0M705.9 318.1h0M708.8 318.3h0M673.4 320.6h0M674.8 319.9h0M676.9 320.1h0M678.6 319.8h0M681.6 320.7h0M682.8 319.7h0M685.1 320.7h0M687.6 319.9h0M689.9 320.5h0M691.9 320.3h0M696.2 320.1h0M698.6 320.8h0M700.3 320.4h0M702.8 319.7h0M704.2 320.0h0M706.9 320.3h0M673.2 322.1h0M674.6 321.7h0M677.2 322.5h0M679.3 322.1h0M680.7 321.8h0M685.6 321.8h0M687.2 321.7h0M690.4 322.0h0M691.7 321.8h0M698.3 322.1h0M699.6 322.6h0M702.2 322.9h0M704.6 322.7h0M671.0 325.0h0M673.6 325.1h0M674.7 324.1h0M676.5 323.8h0M679.4 324.4h0M680.7 324.7h0M683.9 324.6h0M685.4 324.2h0M687.0 324.1h0M674.7 325.9h0M677.3 326.8h0M679.5 326.2h0M681.2 326.9h0M685.0 326.8h0M687.3 327.1h0M691.1 326.6h0M693.3 326.4h0M700.2 326.6h0M676.6 329.0h0M678.7 328.4h0M686.0 328.7h0M688.2 328.4h0M690.0 328.6h0M693.7 328.9h0M696.2 328.1h0M679.8 330.7h0M685.2 330.3h0M687.7 330.6h0"/>
<path stroke="#ffe600" stroke-width="3.0" d="M647.2 248.9h0M655.5 248.3h0M631.6 253.5h0M633.5 253.2h0M666.0 252.8h0M649.8 255.7h0M654.3 254.8h0M655.6 255.1h0M662.7 255.5h0M664.6 254.8h0M641.8 257.1h0M643.5 257.4h0M649.6 257.0h0M669.0 257.2h0M626.6 259.4h0M639.0 259.5h0M641.6 259.9h0M666.2 259.9h0M674.3 259.4h0M698.0 259.9h0M639.7 261.8h0M645.1 261.0h0M660.6 261.4h0M697.9 260.9h0M643.6 262.9h0M660.3 263.5h0M679.0 263.1h0M612.2 265.1h0M639.9 265.0h0M643.5 265.0h0M676.8 265.5h0M620.2 268.0h0M637.0 268.0h0M639.1 267.9h0M641.6 267.9h0M651.5 267.7h0M684.1 267.7h0M622.4 269.5h0M633.2 269.8h0M634.9 269.3h0M636.5 269.3h0M639.2 269.1h0M649.2 269.2h0M652.4 269.9h0M653.7 270.1h0M655.5 270.3h0M658.8 270.0h0M679.5 269.2h0M684.0 270.1h0M689.3 269.8h0M693.8 270.4h0M696.1 270.2h0M700.7 269.2h0M617.9 271.8h0M619.9 271.2h0M622.8 271.7h0M633.7 271.5h0M635.2 272.1h0M636.9 272.4h0M658.2 271.8h0M660.3 271.7h0M683.5 272.6h0M685.1 272.2h0M699.9 272.2h0M711.0 271.8h0M611.6 274.6h0M626.8 273.6h0M632.4 273.3h0M634.9 273.7h0M637.2 273.4h0M677.7 273.7h0M679.0 273.4h0M685.8 273.6h0M699.6 274.0h0M702.0 274.4h0M608.4 276.4h0M611.9 276.1h0M626.4 275.6h0M633.5 276.3h0M635.6 276.4h0M637.5 275.8h0M652.1 275.8h0M698.4 275.9h0M699.8 276.5h0M703.0 275.7h0M704.7 276.0h0M707.2 276.2h0M708.8 275.6h0M681.5 277.9h0M689.5 277.7h0M691.6 278.8h0M695.7 278.1h0M704.3 278.4h0M684.0 280.9h0M689.8 280.1h0M700.8 280.2h0M701.8 280.2h0M605.5 282.4h0M689.6 282.0h0M691.6 282.5h0M700.5 282.3h0M706.2 282.7h0M708.8 283.0h0M632.8 285.0h0M663.0 285.0h0M691.3 285.1h0M693.6 284.1h0M695.9 285.0h0M698.4 285.1h0M642.0 286.3h0M661.8 287.2h0M681.6 286.0h0M692.2 286.0h0M693.7 287.2h0M695.7 286.0h0M698.6 287.0h0M704.0 286.9h0M662.6 288.4h0M664.6 289.0h0M665.9 289.0h0M677.0 288.8h0M681.3 288.5h0M693.9 289.2h0M696.5 289.3h0M704.5 288.2h0M710.5 289.0h0M631.4 291.1h0M649.4 291.2h0M664.4 291.0h0M666.7 290.9h0M690.0 291.0h0M693.6 291.0h0M696.0 291.2h0M709.0 290.7h0M710.7 290.5h0M601.6 293.0h0M650.1 292.7h0M666.1 292.2h0M694.1 292.2h0M695.7 292.9h0M710.9 293.0h0M650.5 294.4h0M651.4 294.7h0M690.3 294.4h0M693.4 294.4h0M695.8 294.8h0M698.4 295.7h0M612.5 297.8h0M651.9 296.7h0M654.2 297.1h0M671.2 297.8h0M679.5 297.6h0M685.1 297.6h0M689.7 296.8h0M694.4 296.4h0M696.0 297.8h0M697.4 297.3h0M700.0 296.6h0M702.0 297.7h0M610.4 298.6h0M652.4 298.9h0M668.9 299.8h0M670.3 299.1h0M673.6 298.5h0M675.3 299.0h0M678.9 298.6h0M668.8 303.8h0M676.9 303.0h0M670.7 305.8h0M675.5 306.1h0M677.2 305.5h0M698.2 308.2h0M665.9 309.5h0M695.6 309.0h0M697.7 309.9h0M708.1 310.0h0M670.8 311.4h0M696.2 312.1h0M698.6 311.6h0M665.0 313.3h0M668.7 316.0h0M673.2 316.5h0M677.6 334.2h0"/>
<path stroke="#ffffff" stroke-width="2.6" d="M680.6 333.0h0M680.9 344.7h0M689.1 355.6h0M687.4 347.6h0M684.8 341.4h0M690.6 346.3h0M699.1 349.3h0"/>
<path stroke="#ff0a0a" stroke-width="2.6" d="M680.2 337.4h0M679.2 340.3h0M683.9 346.0h0M669.4 335.3h0M680.1 345.3h0M680.2 342.2h0M675.2 339.9h0M688.6 339.4h0M677.8 336.7h0M691.3 346.3h0M679.0 347.2h0M674.4 340.2h0M689.3 343.5h0M681.3 338.6h0M693.9 351.6h0M689.5 340.0h0M689.4 343.8h0M678.8 340.6h0M678.7 338.1h0M676.8 340.5h0M682.2 341.4h0M675.1 341.5h0M683.8 342.9h0M675.4 338.7h0M674.7 340.0h0M673.2 337.2h0M674.7 338.0h0M675.2 347.8h0M679.8 342.3h0M684.9 343.2h0M685.2 346.0h0M680.8 337.8h0M686.0 344.8h0M682.7 342.5h0M689.1 339.4h0M694.8 347.3h0M689.5 349.3h0M695.7 354.9h0M686.7 342.5h0M681.1 335.7h0M684.1 344.1h0M674.0 340.5h0M675.7 344.5h0M683.0 346.0h0M679.5 341.6h0M695.5 340.7h0M682.5 342.8h0M681.7 342.3h0M688.2 345.9h0M678.9 346.3h0M684.4 341.5h0M689.1 343.5h0M681.4 338.9h0M670.3 337.8h0M696.1 348.3h0M677.3 337.4h0M690.0 342.7h0M688.2 351.4h0M680.2 344.8h0M672.9 338.3h0M674.5 337.2h0M685.4 345.0h0M672.0 338.6h0M687.4 342.0h0M677.8 345.0h0M682.9 343.3h0M693.4 345.0h0M680.1 344.6h0M676.9 342.3h0M694.3 350.1h0M688.7 353.9h0M678.9 344.6h0M687.1 343.5h0M691.4 345.0h0M692.9 344.4h0M674.3 332.8h0M688.0 347.3h0M669.8 345.4h0M668.9 339.6h0M675.4 340.0h0M699.3 346.2h0M694.0 346.9h0"/>
<path stroke="#b4ff00" stroke-width="3.0" d="M653.9 257.4h0M656.7 257.0h0M652.6 259.1h0M659.7 259.6h0M669.1 259.9h0M672.8 258.9h0M643.5 261.4h0M652.1 261.2h0M658.4 261.5h0M674.4 260.7h0M641.0 263.7h0M645.9 263.4h0M652.1 263.0h0M654.0 262.9h0M656.3 264.1h0M658.4 262.9h0M662.3 263.0h0M677.7 262.9h0M641.4 265.3h0M674.7 265.0h0M678.7 265.0h0M680.9 265.4h0M677.5 267.7h0M679.4 267.9h0M685.5 267.9h0M695.6 267.9h0M698.2 268.3h0M620.3 269.8h0M684.9 269.6h0M687.4 269.3h0M691.6 269.5h0M698.7 269.1h0M639.5 272.2h0M687.5 272.0h0M689.4 271.5h0M691.9 272.1h0M696.0 272.1h0M698.3 271.8h0M654.4 274.3h0M683.9 274.7h0M687.5 273.5h0M697.6 273.9h0M709.2 274.0h0M649.7 276.7h0M653.8 276.1h0M655.6 275.9h0M685.1 276.7h0M687.1 276.4h0M695.4 275.6h0M632.6 278.6h0M634.9 277.8h0M650.1 278.4h0M651.7 278.4h0M653.8 278.6h0M655.9 278.7h0M687.9 278.6h0M693.3 277.9h0M702.1 278.5h0M706.5 278.0h0M708.0 278.8h0M605.4 280.1h0M633.2 280.3h0M675.4 280.5h0M676.9 280.6h0M687.9 279.8h0M704.4 279.7h0M632.6 281.9h0M645.6 282.8h0M677.5 283.0h0M704.1 282.1h0M646.2 285.1h0M664.5 284.0h0M666.9 283.9h0M669.1 284.2h0M677.0 284.0h0M689.8 284.1h0M700.3 284.3h0M704.7 285.0h0M707.1 285.0h0M710.8 284.0h0M643.8 286.2h0M658.0 286.7h0M659.9 286.7h0M669.0 286.7h0M676.7 286.2h0M689.5 287.0h0M700.1 286.9h0M711.4 287.3h0M712.8 287.2h0M659.9 288.2h0M674.4 288.7h0M678.8 289.3h0M691.9 289.4h0M698.0 288.7h0M699.5 289.3h0M697.6 291.0h0M699.9 290.2h0M703.9 290.2h0M651.5 292.7h0M654.4 293.4h0M664.6 293.0h0M675.3 292.7h0M689.9 292.4h0M698.1 292.8h0M708.5 292.4h0M645.4 295.2h0M653.8 295.1h0M656.1 294.5h0M673.2 294.4h0M676.4 294.5h0M678.8 294.9h0M687.5 295.2h0M700.4 294.9h0M703.0 295.6h0M708.8 295.3h0M710.8 295.6h0M610.3 297.2h0M647.2 296.9h0M649.1 297.2h0M656.4 297.5h0M673.4 297.6h0M688.2 297.0h0M707.0 296.6h0M717.7 297.2h0M649.5 298.6h0M653.5 299.3h0M677.1 299.5h0M697.9 298.8h0M666.9 300.9h0M668.5 301.6h0M673.4 301.0h0M675.5 302.0h0M687.3 301.4h0M702.7 300.8h0M705.0 300.7h0M706.1 302.0h0M667.0 303.1h0M704.8 303.4h0M666.5 305.0h0M668.0 304.9h0M673.0 306.2h0M668.4 308.2h0M671.0 307.3h0M673.4 307.7h0M675.2 307.9h0M700.5 308.1h0M701.9 308.1h0M707.9 307.9h0M668.5 309.2h0M671.5 310.1h0M673.6 309.3h0M692.3 310.3h0M693.4 309.3h0M700.5 309.2h0M706.9 309.1h0M710.6 310.0h0M666.7 312.3h0M700.6 311.8h0M707.9 312.4h0M668.2 314.1h0M670.5 314.5h0M693.3 313.6h0M696.7 314.2h0M697.9 314.0h0M710.8 313.7h0M670.3 316.1h0M691.7 316.1h0M694.4 316.2h0M673.5 317.9h0M674.3 318.5h0M693.9 318.1h0M694.3 320.3h0M683.9 322.1h0M693.8 323.0h0M695.3 322.2h0M690.4 324.9h0M696.4 324.8h0M698.3 324.6h0M700.6 324.6h0M701.6 324.3h0M683.5 326.2h0M696.0 326.6h0M698.4 326.1h0M681.7 327.9h0M684.1 328.2h0M683.0 330.6h0"/>
<path stroke="#22e83a" stroke-width="2.6" d="M677.9 346.1h0M681.7 346.5h0M686.7 348.9h0M682.9 340.4h0M687.8 343.4h0M690.0 347.3h0M682.2 344.7h0M676.9 341.5h0M670.6 334.1h0M677.2 329.7h0M677.9 338.8h0M681.7 335.7h0M693.2 347.4h0M688.6 348.3h0M686.2 349.3h0M680.5 340.8h0"/>
<path stroke="#ff7a00" stroke-width="2.6" d="M684.9 343.7h0M680.5 343.6h0M678.2 342.5h0M681.9 342.7h0M690.7 345.5h0M689.5 344.5h0M682.9 345.3h0M686.5 347.9h0M688.3 346.5h0M687.5 345.6h0M682.2 349.5h0M685.2 350.4h0M680.9 338.7h0M687.3 342.7h0M673.9 332.5h0"/>
<path stroke="#ff0a0a" stroke-width="2.1" d="M657.2 245.5h0M661.9 242.0h0M650.2 245.4h0M655.2 244.4h0M659.2 247.1h0M650.0 245.2h0M646.1 246.1h0M656.3 245.0h0M661.3 242.8h0M650.8 245.0h0M657.8 247.7h0M647.2 244.8h0M655.1 245.1h0M653.8 246.6h0M658.2 241.7h0M654.4 244.0h0M653.2 246.4h0M660.2 243.4h0M652.3 240.8h0M652.5 247.6h0M645.7 243.3h0M647.4 243.4h0M654.2 244.4h0M664.1 244.4h0M655.3 244.2h0"/>
<path stroke="#ff0a0a" stroke-width="3.0" d="M645.1 246.9h0M634.6 249.0h0M639.4 248.5h0M640.9 248.4h0M643.1 249.1h0M645.0 249.0h0M649.4 249.3h0M661.0 249.0h0M635.7 250.9h0M639.2 250.3h0M642.9 251.6h0M645.6 250.8h0M649.3 251.0h0M652.0 251.4h0M653.3 251.0h0M658.4 251.2h0M660.0 250.8h0M670.2 250.8h0M674.6 250.6h0M677.0 250.6h0M679.8 251.1h0M681.2 251.3h0M638.8 252.4h0M642.0 252.6h0M643.3 253.3h0M645.8 253.4h0M647.0 253.0h0M649.4 252.8h0M651.2 252.7h0M658.6 253.6h0M660.5 253.1h0M662.2 253.1h0M671.4 252.7h0M672.3 253.4h0M675.6 253.6h0M679.4 252.6h0M681.9 252.6h0M685.3 252.5h0M688.2 253.2h0M631.3 255.4h0M633.4 255.4h0M635.7 255.3h0M636.6 254.5h0M638.9 254.9h0M645.7 254.9h0M647.8 254.9h0M652.5 254.5h0M658.0 255.4h0M660.1 254.8h0M668.7 254.5h0M670.4 255.3h0M672.6 254.5h0M675.7 255.2h0M677.7 254.5h0M679.6 254.4h0M681.1 254.4h0M683.3 254.9h0M684.9 254.7h0M687.5 255.1h0M689.4 255.7h0M691.2 254.9h0M694.0 255.7h0M631.1 257.0h0M633.1 257.9h0M635.2 256.9h0M637.5 256.7h0M672.6 257.3h0M674.5 257.0h0M677.2 256.8h0M678.6 256.6h0M680.8 257.9h0M683.1 257.6h0M685.2 257.7h0M687.4 257.4h0M689.4 257.7h0M695.4 257.7h0M631.0 259.9h0M632.9 259.7h0M634.8 258.8h0M676.8 258.8h0M679.8 259.9h0M680.7 259.7h0M683.5 258.7h0M685.6 259.2h0M687.7 260.0h0M689.3 259.3h0M691.6 259.5h0M693.7 259.7h0M695.5 258.7h0M629.4 261.1h0M630.8 261.9h0M632.8 261.7h0M635.4 261.6h0M677.5 260.8h0M679.1 261.8h0M681.3 260.7h0M683.8 261.6h0M685.7 261.7h0M687.8 260.7h0M690.4 261.0h0M691.6 260.8h0M695.9 261.1h0M621.8 263.6h0M624.4 264.1h0M628.9 263.9h0M631.3 263.4h0M633.2 263.6h0M635.0 263.4h0M636.8 263.2h0M681.6 263.4h0M683.9 263.3h0M689.4 263.2h0M693.9 264.0h0M695.9 263.7h0M698.0 263.4h0M702.1 263.6h0M622.0 265.5h0M624.5 265.3h0M626.6 265.8h0M628.5 264.9h0M631.1 265.2h0M633.1 265.6h0M635.5 265.3h0M654.7 265.3h0M655.5 265.1h0M658.5 266.2h0M660.7 265.3h0M662.1 265.0h0M666.3 266.1h0M686.0 265.9h0M687.4 265.4h0M689.9 266.1h0M693.2 265.7h0M695.3 265.3h0M697.7 265.8h0M699.9 265.9h0M702.9 265.1h0M704.7 265.6h0M613.4 267.7h0M615.5 267.4h0M618.2 268.3h0M624.2 267.4h0M626.6 267.4h0M628.8 267.2h0M631.2 267.7h0M633.4 268.3h0M634.5 267.7h0M647.3 267.9h0M660.4 268.4h0M662.7 268.3h0M664.9 267.9h0M667.0 268.2h0M668.7 267.9h0M671.4 268.1h0M672.3 267.6h0M675.6 268.1h0M690.3 267.4h0M691.2 267.3h0M693.6 267.4h0M700.2 267.5h0M703.9 267.4h0M607.5 270.5h0M625.2 269.8h0M627.1 269.4h0M628.2 269.4h0M631.1 269.8h0M662.9 269.9h0M664.1 269.2h0M666.2 269.7h0M669.3 269.8h0M673.4 269.8h0M674.7 270.5h0M677.7 270.3h0M704.8 270.0h0M708.1 269.2h0M605.4 271.6h0M631.5 272.2h0M640.9 272.4h0M643.7 272.2h0M645.3 271.7h0M647.9 271.9h0M654.1 272.0h0M656.3 272.4h0M668.8 272.0h0M670.3 271.4h0M672.7 271.4h0M675.3 272.3h0M676.6 272.3h0M679.4 272.2h0M680.6 272.0h0M703.9 271.7h0M618.1 274.7h0M629.0 274.6h0M630.4 273.6h0M639.4 274.2h0M641.5 274.0h0M643.6 274.2h0M646.1 273.4h0M650.4 274.2h0M652.2 273.8h0M670.5 274.1h0M672.5 274.1h0M681.0 274.7h0M605.8 275.4h0M615.9 276.3h0M618.9 276.8h0M621.0 275.5h0M622.3 276.6h0M628.3 276.4h0M630.4 276.3h0M639.2 275.9h0M642.0 276.0h0M643.7 275.5h0M645.7 276.5h0M647.3 275.9h0M679.2 276.0h0M681.8 275.9h0M683.5 276.3h0M610.5 278.5h0M611.4 278.5h0M613.7 278.6h0M616.5 278.1h0M618.2 278.2h0M620.4 278.8h0M622.0 278.4h0M624.4 278.7h0M628.6 278.2h0M631.4 278.4h0M641.4 278.4h0M643.3 278.3h0M645.3 278.2h0M683.8 278.0h0M685.4 278.5h0M607.5 280.2h0M610.5 280.8h0M614.7 280.4h0M616.2 280.3h0M617.8 279.9h0M620.5 280.7h0M622.9 280.5h0M624.6 279.9h0M629.0 281.0h0M630.9 280.2h0M635.7 280.8h0M637.5 280.6h0M641.0 280.9h0M643.9 280.8h0M678.9 280.6h0M691.8 280.0h0M693.8 279.9h0M608.5 282.7h0M609.9 282.0h0M611.6 282.2h0M613.4 282.2h0M616.2 282.2h0M618.6 282.4h0M620.5 282.1h0M622.4 282.7h0M624.8 282.0h0M626.7 281.7h0M628.7 282.8h0M631.4 282.8h0M634.6 282.8h0M636.9 281.9h0M638.9 282.0h0M641.7 281.8h0M678.5 281.7h0M680.7 282.3h0M685.6 283.0h0M687.4 282.6h0M696.5 282.9h0M609.8 284.5h0M611.5 284.0h0M613.8 284.6h0M616.8 285.1h0M617.7 284.3h0M620.5 284.2h0M621.9 284.4h0M624.4 284.5h0M627.0 284.4h0M629.2 284.2h0M635.1 284.4h0M636.9 284.6h0M639.5 285.2h0M640.8 284.3h0M681.6 284.3h0M685.1 284.9h0M687.3 283.9h0M605.8 286.2h0M607.4 286.1h0M610.0 287.2h0M612.5 286.7h0M613.9 286.4h0M615.9 286.8h0M617.7 286.7h0M620.9 286.5h0M621.9 287.2h0M625.0 286.5h0M627.2 286.2h0M629.2 287.1h0M631.0 286.6h0M633.5 286.3h0M635.0 286.1h0M639.1 285.9h0M685.8 286.0h0M688.0 286.3h0M603.6 288.9h0M607.6 289.1h0M609.9 289.1h0M611.7 288.9h0M613.4 288.2h0M616.3 288.6h0M618.2 288.2h0M620.8 288.9h0M621.8 289.4h0M624.3 289.1h0M627.0 288.5h0M629.0 288.8h0M631.0 288.8h0M633.4 288.1h0M635.3 288.1h0M636.8 288.7h0M639.3 288.9h0M686.1 289.2h0M603.3 291.4h0M605.1 291.4h0M607.6 291.3h0M609.3 290.2h0M612.7 290.1h0M614.3 290.8h0M617.9 291.4h0M619.9 291.0h0M623.1 291.5h0M624.0 290.7h0M627.1 290.2h0M629.0 291.0h0M635.1 290.1h0M637.5 290.7h0M639.8 290.6h0M684.9 291.2h0M604.2 293.6h0M605.7 293.2h0M608.3 293.3h0M609.6 293.2h0M612.7 292.6h0M614.2 292.7h0M615.6 292.2h0M617.8 292.5h0M619.9 292.5h0M623.2 292.8h0M624.7 293.5h0M627.3 293.4h0M629.3 292.7h0M630.7 293.5h0M637.3 292.5h0M639.8 292.5h0M681.9 293.0h0M684.1 292.5h0M685.2 292.4h0M688.1 293.4h0M604.2 295.1h0M605.8 294.7h0M609.2 294.3h0M614.1 294.8h0M616.8 295.6h0M618.4 295.6h0M620.0 294.5h0M621.9 294.8h0M626.5 294.9h0M629.3 295.5h0M634.7 295.1h0M637.6 294.6h0M638.9 294.3h0M681.8 295.4h0M682.7 295.1h0M685.2 295.6h0M604.1 297.3h0M605.5 296.8h0M607.3 296.6h0M614.0 296.6h0M615.7 297.1h0M617.8 296.8h0M619.8 297.6h0M622.6 297.5h0M625.1 297.2h0M629.1 296.5h0M635.3 296.9h0M637.6 296.5h0M640.8 297.3h0M643.7 297.8h0M645.5 297.7h0M681.1 297.3h0M684.0 297.0h0M603.5 298.9h0M605.2 299.7h0M614.8 298.7h0M615.6 298.7h0M617.8 299.5h0M623.1 299.4h0M627.2 299.6h0M629.1 298.9h0M630.4 298.6h0M633.3 299.5h0M635.7 299.5h0M637.6 299.5h0M638.6 299.8h0M641.9 299.8h0M643.5 298.6h0M646.1 299.4h0M647.3 298.6h0M605.4 300.9h0M607.7 301.1h0M609.3 301.7h0M612.6 301.0h0M614.6 301.0h0M616.4 300.7h0M618.0 301.5h0M620.7 301.0h0M622.8 300.8h0M624.9 301.6h0M626.0 301.1h0M629.3 301.3h0M630.4 301.2h0M632.3 301.5h0M635.0 301.2h0M637.8 301.9h0M638.9 301.1h0M641.8 301.7h0M643.0 300.9h0M645.4 301.4h0M648.0 300.6h0M650.4 301.6h0M652.2 300.9h0M656.5 301.6h0M658.8 301.7h0M660.6 300.7h0M663.0 300.7h0M664.8 300.8h0M609.8 303.0h0M612.2 303.7h0M614.0 303.1h0M616.5 303.0h0M618.6 303.1h0M620.5 302.8h0M623.1 303.9h0M625.3 304.1h0M627.2 303.4h0M628.5 304.0h0M631.3 304.0h0M633.3 302.9h0M634.5 304.0h0M637.7 303.7h0M639.4 303.4h0M641.5 303.3h0M643.9 303.6h0M645.8 303.5h0M647.4 302.9h0M649.3 303.8h0M651.4 303.7h0M653.3 303.7h0M656.7 304.0h0M658.6 303.0h0M660.6 303.7h0M662.0 303.2h0M664.7 303.6h0M607.5 305.4h0M610.2 306.1h0M611.3 305.0h0M613.5 305.9h0M616.6 305.5h0M620.4 306.1h0M622.5 304.9h0M624.5 305.7h0M626.6 306.0h0M630.9 304.8h0M632.8 306.1h0M634.6 305.9h0M637.3 305.8h0M639.3 304.9h0M640.8 305.5h0M646.2 306.0h0M648.4 305.8h0M649.5 305.8h0M652.3 305.4h0M653.6 305.9h0M655.5 305.0h0M660.9 306.2h0M661.8 305.8h0M664.3 305.2h0M610.0 307.2h0M612.1 307.0h0M614.3 307.2h0M617.8 307.3h0M621.0 307.5h0M623.0 308.3h0M624.9 308.2h0M633.1 307.7h0M635.6 307.5h0M637.3 307.3h0M638.9 308.0h0M641.0 307.1h0M643.7 307.5h0M644.9 308.2h0M647.1 307.8h0M649.4 308.2h0M651.8 307.5h0M654.0 307.9h0M655.8 307.5h0M658.0 307.2h0M661.0 308.2h0M663.1 307.4h0M664.5 307.6h0M609.6 309.5h0M612.3 309.9h0M614.2 310.4h0M616.3 309.3h0M618.1 310.2h0M620.3 309.5h0M622.6 309.6h0M624.9 309.5h0M626.7 310.3h0M636.7 309.4h0M639.3 309.8h0M641.1 310.1h0M643.0 309.1h0M646.3 309.6h0M649.1 310.2h0M653.6 310.0h0M656.1 309.9h0M657.9 309.5h0M659.9 310.1h0M662.6 309.2h0M664.6 309.6h0M610.1 311.8h0M614.1 311.3h0M616.2 311.7h0M618.7 311.4h0M621.1 311.6h0M622.8 311.8h0M625.1 311.4h0M626.7 311.7h0M628.4 311.5h0M643.9 311.9h0M645.4 311.6h0M648.1 312.1h0M649.8 311.5h0M651.3 311.9h0M654.4 312.5h0M656.4 311.4h0M660.1 312.1h0M661.7 311.6h0M614.3 314.4h0M619.9 314.3h0M623.2 313.4h0M624.3 314.4h0M627.0 313.9h0M628.7 313.4h0M631.0 314.0h0M632.5 314.1h0M649.8 313.8h0M651.4 313.4h0M653.8 313.5h0M656.3 314.2h0M657.5 313.8h0M659.8 314.2h0M662.9 313.9h0M614.5 315.4h0M620.4 316.5h0M622.6 315.5h0M624.3 315.9h0M626.3 316.0h0M628.7 315.4h0M631.5 315.6h0M632.9 316.5h0M634.5 316.7h0M636.6 315.6h0M652.3 315.9h0M654.3 316.1h0M655.8 315.7h0M658.7 316.3h0M659.8 315.3h0M662.3 315.7h0M663.9 316.2h0M666.2 316.4h0M620.7 318.7h0M624.6 318.4h0M629.1 318.8h0M631.4 317.4h0M633.6 317.8h0M635.2 317.9h0M636.6 317.6h0M639.7 318.1h0M642.9 318.6h0M660.6 318.3h0M662.4 318.6h0M664.6 318.5h0M669.4 318.6h0M670.1 318.7h0M620.1 320.1h0M624.1 319.6h0M627.4 320.4h0M629.5 319.8h0M631.0 320.9h0M632.8 320.8h0M635.5 319.9h0M637.5 320.9h0M639.4 319.6h0M640.9 320.8h0M644.0 319.6h0M645.8 320.6h0M650.5 320.2h0M652.4 319.8h0M654.2 320.0h0M656.0 320.3h0M658.0 320.9h0M660.0 320.3h0M662.0 319.7h0M664.6 320.7h0M668.4 320.6h0M670.2 320.7h0M621.8 321.7h0M625.2 322.2h0M626.8 321.7h0M628.9 322.1h0M631.1 322.0h0M632.6 321.8h0M635.5 322.8h0M636.8 322.2h0M639.3 322.9h0M641.4 321.8h0M644.2 322.7h0M645.9 322.9h0M647.8 322.4h0M649.2 322.5h0M652.4 321.8h0M654.3 321.8h0M656.1 322.9h0M657.6 321.6h0M660.7 322.5h0M662.4 322.2h0M664.3 322.8h0M666.0 321.6h0M670.8 322.6h0M627.2 324.6h0M628.3 324.3h0M630.3 324.2h0M633.1 325.0h0M635.1 324.0h0M637.9 324.6h0M639.7 324.0h0M641.6 324.6h0M643.0 324.8h0M644.9 324.5h0M647.6 324.2h0M649.8 324.9h0M651.2 324.5h0M654.5 324.8h0M655.8 323.7h0M657.7 324.8h0M660.3 323.8h0M662.0 323.9h0M664.3 324.5h0M626.3 326.0h0M629.1 326.9h0M631.5 327.1h0M633.4 327.1h0M635.6 326.0h0M636.9 326.4h0M638.8 326.5h0M641.2 326.1h0M645.9 327.1h0M647.8 326.8h0M650.5 326.7h0M652.6 326.8h0M654.6 327.1h0M656.0 326.0h0M658.5 326.7h0M660.6 327.1h0M662.3 325.9h0M663.9 326.4h0M667.2 326.8h0M668.8 326.7h0M670.9 325.9h0M673.0 327.1h0M629.2 328.2h0M631.1 328.4h0M632.5 328.2h0M635.4 327.9h0M636.8 328.6h0M639.6 328.5h0M641.1 329.2h0M643.0 328.4h0M645.9 328.4h0M648.0 328.9h0M649.6 329.0h0M652.5 328.8h0M654.0 328.9h0M655.8 328.1h0M658.5 328.1h0M660.9 328.5h0M661.8 329.3h0M664.6 328.3h0M666.5 328.8h0M669.1 328.6h0M671.1 328.4h0M673.0 328.7h0M674.9 329.1h0M634.8 330.2h0M636.8 331.2h0M639.9 330.8h0M641.5 331.0h0M643.2 330.9h0M645.6 330.6h0M647.2 330.2h0M650.2 330.5h0M651.6 330.4h0M654.1 330.0h0M658.6 330.9h0M660.0 330.2h0M662.3 330.4h0M664.6 331.3h0M666.3 330.1h0M669.1 331.0h0M671.3 330.7h0M672.2 330.7h0M675.4 331.1h0M676.7 331.2h0M641.0 332.3h0M643.5 333.2h0M645.0 332.8h0M648.1 333.5h0M651.2 332.3h0M653.9 333.3h0M656.3 333.5h0M658.0 333.5h0M660.0 333.2h0M663.1 332.4h0M664.7 332.8h0M666.2 333.1h0M669.1 333.0h0M671.2 332.7h0M675.0 333.4h0M643.5 334.8h0M644.9 335.4h0M649.1 334.3h0M651.4 335.2h0M656.0 334.2h0M658.4 335.3h0M660.8 335.6h0M662.1 335.2h0M665.0 335.0h0M666.1 335.6h0M668.2 335.5h0M670.1 335.2h0M673.4 334.4h0M674.5 334.8h0M647.1 336.5h0M650.4 336.6h0M654.0 337.5h0M659.7 336.6h0M667.3 336.9h0M668.1 337.6h0M670.5 337.4h0M673.4 337.5h0M656.6 338.4h0M657.7 339.1h0M660.0 341.7h0"/>
<path stroke="#ffffff" stroke-width="2.1" d="M652.1 243.9h0M647.6 242.3h0M653.7 242.6h0M650.1 245.5h0M641.9 245.0h0M653.8 245.3h0M650.8 243.3h0M649.3 243.1h0M654.1 241.4h0"/>
<path stroke="#ff0a0a" stroke-width="2.81" d="M673.7 323.9h0M679.6 324.2h0M678.4 324.2h0M675.6 321.6h0M680.6 325.0h0M674.6 325.9h0M674.5 321.7h0M679.4 325.1h0M679.8 323.4h0M675.0 325.1h0M676.6 325.2h0M683.5 327.3h0M678.7 327.4h0M677.2 327.1h0M675.9 327.6h0M681.2 324.2h0M677.3 322.2h0M675.1 322.4h0M675.3 328.1h0M677.5 326.6h0M678.5 327.2h0M680.2 326.0h0M673.2 325.7h0M676.1 319.8h0M676.3 324.1h0M676.8 322.4h0M678.1 325.0h0M674.1 326.2h0M678.9 323.8h0M680.7 323.6h0M675.5 326.0h0M677.8 324.1h0M677.5 324.5h0M678.6 322.5h0M678.3 320.8h0M673.8 322.5h0M674.7 323.6h0M677.4 322.5h0M675.2 325.3h0M673.3 323.0h0M676.6 324.1h0M679.5 325.5h0M676.0 324.2h0M677.6 325.0h0M676.6 325.9h0M676.1 321.9h0M678.5 325.6h0M673.8 324.6h0M675.1 325.4h0M677.9 324.6h0M676.0 320.8h0M676.8 322.1h0M677.2 323.4h0M677.2 323.8h0M674.9 323.1h0M674.2 326.3h0M677.3 321.9h0M676.4 324.1h0M677.2 324.6h0M675.5 325.5h0M677.6 325.9h0M677.9 324.9h0M672.1 324.4h0M675.2 321.6h0M679.6 324.9h0M681.4 323.6h0M678.8 325.0h0M676.9 325.8h0M677.9 325.8h0M678.5 325.7h0"/>
</g>
<defs><radialGradient id="sg" cx="45%" cy="40%" r="65%"><stop offset="0" stop-color="#d03ad6"/><stop offset="0.6" stop-color="#b428bc"/><stop offset="1" stop-color="#6e1678"/></radialGradient></defs>
<circle cx="661.2" cy="293" r="14.4" fill="url(#sg)"/>
<ellipse cx="661" cy="290.2" rx="0.9" ry="1.8" fill="#1a1aa8"/>
<path d="M636 253.6 Q634.4 253.4 634.2 256 L632.6 272 Q632 286 632.6 290.6 Q633 292.8 636 293.6 Q648 298.6 661.6 300.6 Q672 300.6 686.6 295.8 Q690.6 294.6 690.8 291 Q691.4 280 689.6 273 Q688 269 679.7 262.6 Q672 254.6 669 252.6 Q665 250 660 250.4 Q647 251.6 636 253.6Z" fill="none" stroke="#1e96ff" stroke-width="3.6" stroke-linejoin="round"/>
<path d="M316.5 472 L386.5 504.6 M387.5 503 L392.5 501.4 M394.6 507.6 L399.6 511.8" fill="none" stroke="#d2d2d2" stroke-width="1.7" stroke-dasharray="3.2 3.1"/>
<path d="M499.2 272.2 L499.2 292.4 L515.4 282.3Z" fill="#fff" stroke="#fff" stroke-width="4.2" stroke-linejoin="round"/>
</svg>
</div>
</div>
</body></html>
